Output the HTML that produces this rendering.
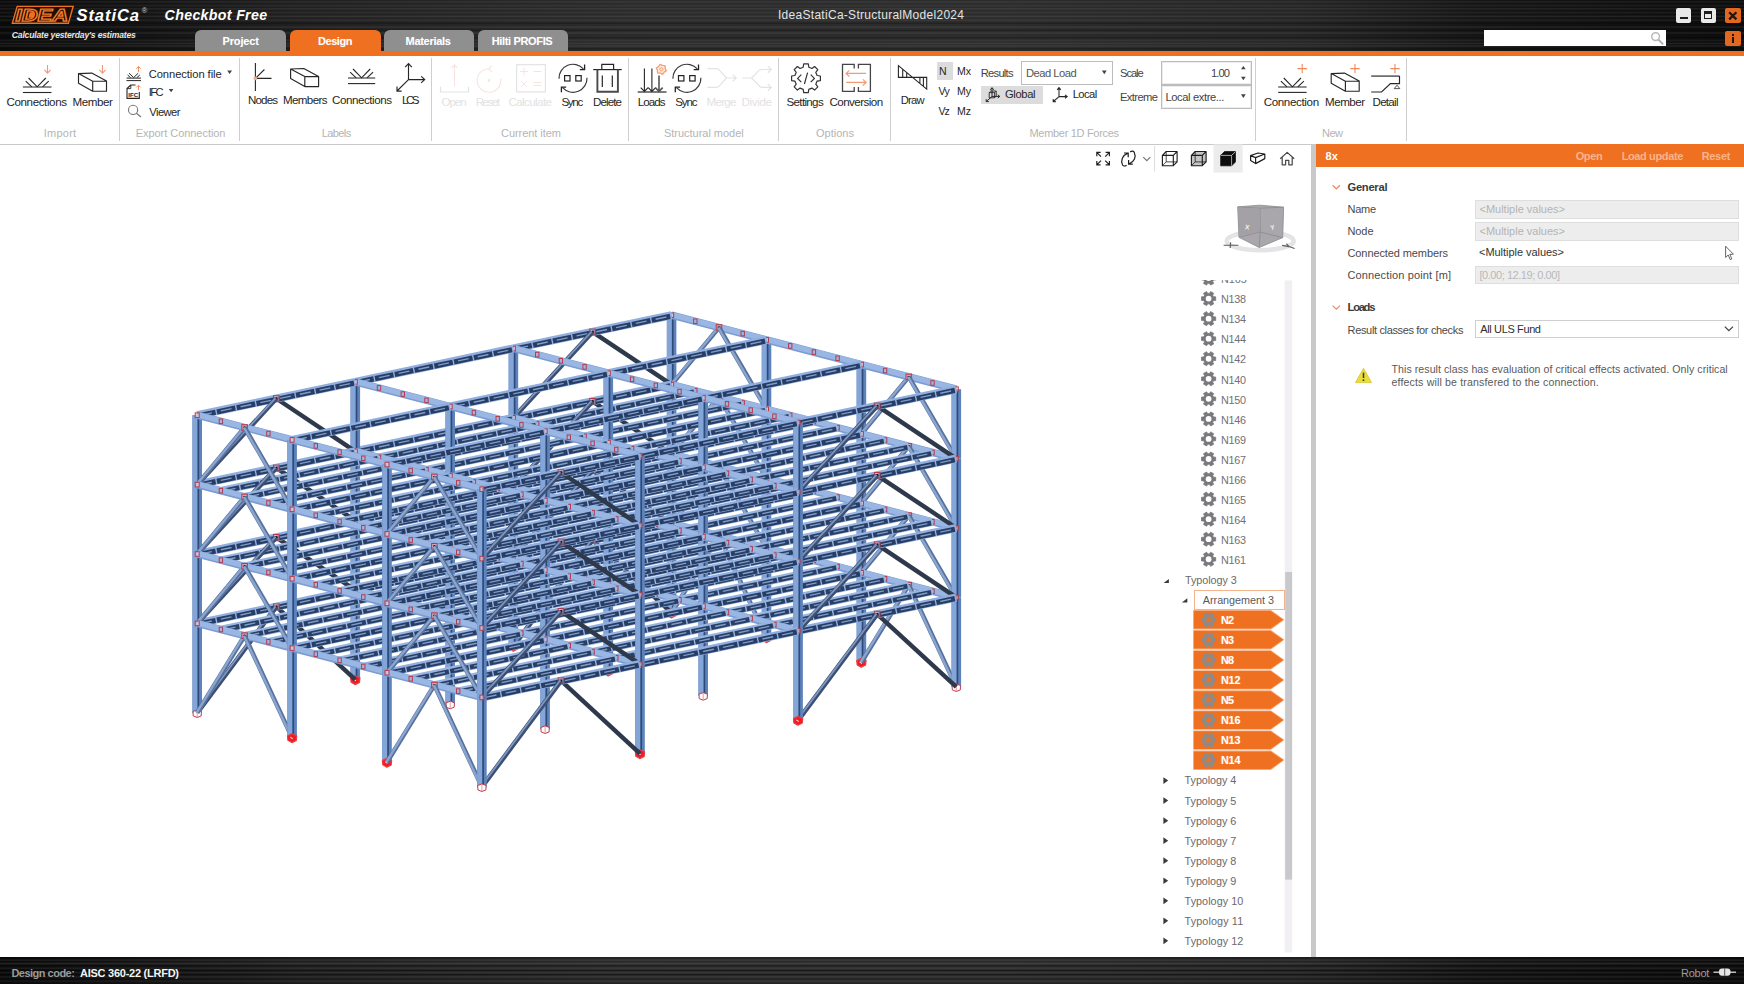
<!DOCTYPE html>
<html lang="en"><head><meta charset="utf-8"><title>IdeaStatiCa-StructuralModel2024</title>
<style>
html,body{margin:0;padding:0;background:#fff;}
body{width:1744px;height:984px;overflow:hidden;font-family:"Liberation Sans",sans-serif;}
#app{position:relative;width:1744px;height:984px;overflow:hidden;background:#fff;}
.t{position:absolute;white-space:nowrap;line-height:normal;font-family:"Liberation Sans",sans-serif;}
.abs{position:absolute;}
svg{position:absolute;overflow:visible;}
#titlebar{left:0;top:0;width:1744px;height:51px;}
#stripe{left:0;top:51px;width:1744px;height:4.6px;background:#f07021;}
.tab{position:absolute;top:30px;height:21.1px;border-radius:6px 6px 0 0;background:#8f8f8f;}
.tab.on{background:#f07021;height:23px;}
#ribbon{left:0;top:55.6px;width:1744px;height:88px;background:#fff;border-bottom:1px solid #c9c9c9;}
.vsep{position:absolute;top:58px;height:83px;width:1px;background:#cfcfcf;}
#status{left:0;top:957px;width:1744px;height:27px;}
.inp{position:absolute;left:1475px;width:261.5px;height:16.5px;background:#ededed;border:1px solid #dedede;box-sizing:content-box;}

#titlebar{background:linear-gradient(180deg,rgba(255,255,255,0) 0px,rgba(255,255,255,0) 0.5px,rgba(255,255,255,0.071) 1.9px,rgba(255,255,255,0) 3.3px,rgba(255,255,255,0) 4.3px,rgba(255,255,255,0.063) 5.7px,rgba(255,255,255,0) 7.1px,rgba(255,255,255,0) 7.4px,rgba(255,255,255,0.088) 8.8px,rgba(255,255,255,0) 10.2px,rgba(255,255,255,0) 11.2px,rgba(255,255,255,0.059) 12.6px,rgba(255,255,255,0) 14.0px,rgba(255,255,255,0) 15.0px,rgba(255,255,255,0.082) 16.4px,rgba(255,255,255,0) 17.8px,rgba(255,255,255,0) 18.8px,rgba(255,255,255,0.073) 20.2px,rgba(255,255,255,0) 21.6px,rgba(0,0,0,0) 22.2px,rgba(0,0,0,0.292) 23.3px,rgba(0,0,0,0) 24.4px,rgba(255,255,255,0) 25.7px,rgba(255,255,255,0.080) 27.1px,rgba(255,255,255,0) 28.5px,rgba(0,0,0,0) 29.2px,rgba(0,0,0,0.287) 30.3px,rgba(0,0,0,0) 31.4px,rgba(255,255,255,0) 31.6px,rgba(255,255,255,0.077) 33.0px,rgba(255,255,255,0) 34.4px,rgba(0,0,0,0) 36.7px,rgba(0,0,0,0.294) 37.8px,rgba(0,0,0,0) 38.9px,rgba(255,255,255,0) 39.0px,rgba(255,255,255,0.060) 40.4px,rgba(255,255,255,0) 41.8px,rgba(255,255,255,0) 42.1px,rgba(255,255,255,0.076) 43.5px,rgba(255,255,255,0) 44.9px,rgba(255,255,255,0) 44.6px,rgba(255,255,255,0.096) 46.0px,rgba(255,255,255,0) 47.4px,rgba(0,0,0,0) 47.8px,rgba(0,0,0,0.305) 48.9px,rgba(0,0,0,0) 50.0px,rgba(0,0,0,0) 51px),linear-gradient(90deg,#0b0b0b 0px,#121212 120px,#202020 300px,#2b2b2b 620px,#2c2c2c 1000px,#252525 1300px,#151515 1480px,#0c0c0c 1744px);}
#status{background:linear-gradient(180deg,rgba(255,255,255,0) 0px,rgba(0,0,0,0) -0.1px,rgba(0,0,0,0.325) 1.0px,rgba(0,0,0,0) 2.1px,rgba(255,255,255,0) 1.6px,rgba(255,255,255,0.086) 3.0px,rgba(255,255,255,0) 4.4px,rgba(255,255,255,0) 5.2px,rgba(255,255,255,0.102) 6.6px,rgba(255,255,255,0) 8.0px,rgba(0,0,0,0) 7.7px,rgba(0,0,0,0.395) 8.8px,rgba(0,0,0,0) 9.9px,rgba(255,255,255,0) 9.8px,rgba(255,255,255,0.075) 11.2px,rgba(255,255,255,0) 12.6px,rgba(0,0,0,0) 12.3px,rgba(0,0,0,0.475) 13.4px,rgba(0,0,0,0) 14.5px,rgba(255,255,255,0) 14.0px,rgba(255,255,255,0.057) 15.4px,rgba(255,255,255,0) 16.8px,rgba(0,0,0,0) 16.5px,rgba(0,0,0,0.452) 17.6px,rgba(0,0,0,0) 18.7px,rgba(255,255,255,0) 18.4px,rgba(255,255,255,0.069) 19.8px,rgba(255,255,255,0) 21.2px,rgba(0,0,0,0) 20.9px,rgba(0,0,0,0.309) 22.0px,rgba(0,0,0,0) 23.1px,rgba(255,255,255,0) 22.6px,rgba(255,255,255,0.061) 24.0px,rgba(255,255,255,0) 25.4px,rgba(0,0,0,0) 24.9px,rgba(0,0,0,0.342) 26.0px,rgba(0,0,0,0) 27.1px,rgba(0,0,0,0) 27px),linear-gradient(90deg,#0b0b0b 0px,#121212 120px,#202020 300px,#2b2b2b 620px,#2c2c2c 1000px,#252525 1300px,#151515 1480px,#0c0c0c 1744px);}

</style></head>
<body>
<div id="app">
<div id="titlebar" class="abs brushed"></div>
<div id="stripe" class="abs"></div>
<svg style="left:0;top:0" width="160" height="30" viewBox="0 0 160 30"><path d="M17.2 6.3 H73.2 L68.4 23.2 H12.3 Z" fill="#1f0d02" stroke="#ec7222" stroke-width="1.35"/><text x="15.6" y="21.3" font-family="Liberation Sans, sans-serif" font-size="16.4" font-weight="bold" font-style="italic" fill="#100703" stroke="#f07a2a" stroke-width="1.25" textLength="52.5" lengthAdjust="spacingAndGlyphs">IDEA</text><rect x="29.2" y="12.2" width="4.6" height="5.6" fill="#f07021" transform="skewX(-14) translate(3.6 0)"/></svg>
<span class="t" style="left:76.5px;top:6.0px;font-size:16.6px;color:#ffffff;font-weight:bold;font-style:italic;letter-spacing:0.888px;">StatiCa</span>
<span class="t" style="left:141.8px;top:6.0px;font-size:7.5px;color:#d2d2d2;font-weight:normal;font-style:normal;">®</span>
<span class="t" style="left:164.6px;top:7.0px;font-size:14.2px;color:#ffffff;font-weight:bold;font-style:italic;letter-spacing:0.328px;">Checkbot Free</span>
<span class="t" style="left:11.8px;top:30.0px;font-size:8.6px;color:#e6e6e6;font-weight:bold;font-style:italic;letter-spacing:-0.186px;">Calculate yesterday's estimates</span>
<span class="t" style="left:778.0px;top:8.0px;font-size:12px;color:#e4e4e4;font-weight:normal;font-style:normal;letter-spacing:0.285px;">IdeaStatiCa-StructuralModel2024</span>
<div class="tab" style="left:195px;width:90.7px"></div>
<span class="t" style="left:222.5px;top:35.0px;font-size:11px;color:#ffffff;font-weight:bold;font-style:normal;letter-spacing:-0.133px;text-shadow:0 0 1px rgba(255,255,255,.25);">Project</span>
<div class="tab on" style="left:290px;width:90.5px"></div>
<span class="t" style="left:318.0px;top:35.0px;font-size:11px;color:#ffffff;font-weight:bold;font-style:normal;letter-spacing:-0.438px;text-shadow:0 0 1px rgba(255,255,255,.25);">Design</span>
<div class="tab" style="left:383.7px;width:90px"></div>
<span class="t" style="left:405.5px;top:35.0px;font-size:11px;color:#ffffff;font-weight:bold;font-style:normal;letter-spacing:-0.275px;text-shadow:0 0 1px rgba(255,255,255,.25);">Materials</span>
<div class="tab" style="left:477.5px;width:90px"></div>
<span class="t" style="left:491.7px;top:35.0px;font-size:11px;color:#ffffff;font-weight:bold;font-style:normal;letter-spacing:-0.344px;text-shadow:0 0 1px rgba(255,255,255,.25);">Hilti PROFIS</span>
<div class="abs" style="left:1676px;top:7.5px;width:15.3px;height:15.5px;background:#e9e9e9;border-radius:2px"></div>
<div class="abs" style="left:1680px;top:17.2px;width:8px;height:2.3px;background:#1c1c1c"></div>
<div class="abs" style="left:1700.5px;top:7.5px;width:15.5px;height:15.5px;background:#e9e9e9;border-radius:2px"></div>
<div class="abs" style="left:1703.6px;top:10.8px;width:6.2px;height:4.6px;border:1.6px solid #1c1c1c;border-top-width:3px"></div>
<div class="abs" style="left:1725px;top:7.5px;width:15.5px;height:15.5px;background:#e2681f;border-radius:2px"></div>
<svg style="left:1725px;top:7.5px" width="16" height="16" viewBox="0 0 16 16"><path d="M4.2 4.2 L11.4 11.4 M11.4 4.2 L4.2 11.4" stroke="#20140c" stroke-width="2.2" fill="none"/></svg>
<div class="abs" style="left:1483.7px;top:30px;width:182.3px;height:16.2px;background:#fff"></div>
<svg style="left:1648px;top:30px" width="18" height="17" viewBox="0 0 18 17"><circle cx="7.6" cy="6.6" r="3.9" fill="none" stroke="#b9b9b9" stroke-width="1.5"/><path d="M10.4 9.6 L15.2 14.4" stroke="#b0b0b0" stroke-width="2"/></svg>
<div class="abs" style="left:1725px;top:30.5px;width:15.5px;height:15.3px;background:#e2681f;border-radius:2px"></div>
<div class="abs" style="left:1732px;top:34px;width:2px;height:2px;background:#24150b"></div>
<div class="abs" style="left:1732px;top:37.3px;width:2px;height:5.6px;background:#24150b"></div>
<div id="status" class="abs brushed"></div>
<span class="t" style="left:11.4px;top:967.0px;font-size:11px;color:#9a9a9a;font-weight:bold;font-style:normal;letter-spacing:-0.507px;">Design code:</span>
<span class="t" style="left:80.0px;top:967.0px;font-size:11px;color:#f4f4f4;font-weight:bold;font-style:normal;letter-spacing:-0.253px;">AISC 360-22 (LRFD)</span>
<span class="t" style="left:1681.0px;top:967.0px;font-size:11px;color:#9c9c9c;font-weight:normal;font-style:normal;letter-spacing:-0.265px;">Robot</span>
<svg style="left:1712px;top:964px" width="26" height="16" viewBox="0 0 26 16"><path d="M1.5 8.2 H24" stroke="#d8d8d8" stroke-width="1.3"/><rect x="7" y="4.6" width="11.5" height="7.2" rx="3" fill="#e6e6e6"/><path d="M12.7 4.6 V11.8" stroke="#555" stroke-width="1"/></svg>
<div id="ribbon" class="abs"></div>
<div class="vsep" style="left:119.0px"></div>
<div class="vsep" style="left:239.0px"></div>
<div class="vsep" style="left:430.7px"></div>
<div class="vsep" style="left:628.2px"></div>
<div class="vsep" style="left:777.7px"></div>
<div class="vsep" style="left:890.2px"></div>
<div class="vsep" style="left:1255.0px"></div>
<div class="vsep" style="left:1406.1px"></div>
<span class="t" style="left:6.5px;top:95.0px;font-size:11.6px;color:#262626;font-weight:normal;font-style:normal;letter-spacing:-0.395px;">Connections</span>
<span class="t" style="left:72.6px;top:95.0px;font-size:11.6px;color:#262626;font-weight:normal;font-style:normal;letter-spacing:-0.426px;">Member</span>
<span class="t" style="left:43.7px;top:127.0px;font-size:11px;color:#b4b4b4;font-weight:normal;font-style:normal;letter-spacing:0.263px;">Import</span>
<span class="t" style="left:148.7px;top:68.0px;font-size:11.2px;color:#262626;font-weight:normal;font-style:normal;letter-spacing:-0.073px;">Connection file</span>
<span class="t" style="left:148.7px;top:86.0px;font-size:11.2px;color:#262626;font-weight:normal;font-style:normal;letter-spacing:-1.516px;">IFC</span>
<span class="t" style="left:149.3px;top:106.0px;font-size:11.2px;color:#262626;font-weight:normal;font-style:normal;letter-spacing:-0.560px;">Viewer</span>
<span class="t" style="left:135.7px;top:127.0px;font-size:11px;color:#b4b4b4;font-weight:normal;font-style:normal;letter-spacing:-0.044px;">Export Connection</span>
<span class="t" style="left:248.0px;top:93.0px;font-size:11.6px;color:#262626;font-weight:normal;font-style:normal;letter-spacing:-0.879px;">Nodes</span>
<span class="t" style="left:283.0px;top:93.0px;font-size:11.6px;color:#262626;font-weight:normal;font-style:normal;letter-spacing:-0.638px;">Members</span>
<span class="t" style="left:332.0px;top:93.0px;font-size:11.6px;color:#262626;font-weight:normal;font-style:normal;letter-spacing:-0.445px;">Connections</span>
<span class="t" style="left:402.0px;top:93.0px;font-size:11.6px;color:#262626;font-weight:normal;font-style:normal;letter-spacing:-2.481px;">LCS</span>
<span class="t" style="left:321.7px;top:127.0px;font-size:11px;color:#b4b4b4;font-weight:normal;font-style:normal;letter-spacing:-0.584px;">Labels</span>
<span class="t" style="left:441.4px;top:95.0px;font-size:11.6px;color:#e2e2e2;font-weight:normal;font-style:normal;letter-spacing:-1.025px;">Open</span>
<span class="t" style="left:475.7px;top:95.0px;font-size:11.6px;color:#e2e2e2;font-weight:normal;font-style:normal;letter-spacing:-1.524px;">Reset</span>
<span class="t" style="left:508.5px;top:95.0px;font-size:11.6px;color:#e2e2e2;font-weight:normal;font-style:normal;letter-spacing:-0.605px;">Calculate</span>
<span class="t" style="left:561.4px;top:95.0px;font-size:11.6px;color:#262626;font-weight:normal;font-style:normal;letter-spacing:-1.327px;">Sync</span>
<span class="t" style="left:592.9px;top:95.0px;font-size:11.6px;color:#262626;font-weight:normal;font-style:normal;letter-spacing:-0.883px;">Delete</span>
<span class="t" style="left:501.0px;top:127.0px;font-size:11px;color:#b4b4b4;font-weight:normal;font-style:normal;letter-spacing:-0.048px;">Current item</span>
<span class="t" style="left:637.7px;top:95.0px;font-size:11.6px;color:#262626;font-weight:normal;font-style:normal;letter-spacing:-0.923px;">Loads</span>
<span class="t" style="left:675.2px;top:95.0px;font-size:11.6px;color:#262626;font-weight:normal;font-style:normal;letter-spacing:-1.160px;">Sync</span>
<span class="t" style="left:706.5px;top:95.0px;font-size:11.6px;color:#e2e2e2;font-weight:normal;font-style:normal;letter-spacing:-0.719px;">Merge</span>
<span class="t" style="left:741.6px;top:95.0px;font-size:11.6px;color:#e2e2e2;font-weight:normal;font-style:normal;letter-spacing:-0.384px;">Divide</span>
<span class="t" style="left:664.0px;top:127.0px;font-size:11px;color:#b4b4b4;font-weight:normal;font-style:normal;letter-spacing:-0.026px;">Structural model</span>
<span class="t" style="left:786.5px;top:95.0px;font-size:11.6px;color:#262626;font-weight:normal;font-style:normal;letter-spacing:-0.672px;">Settings</span>
<span class="t" style="left:829.5px;top:95.0px;font-size:11.6px;color:#262626;font-weight:normal;font-style:normal;letter-spacing:-0.551px;">Conversion</span>
<span class="t" style="left:816.0px;top:127.0px;font-size:11px;color:#b4b4b4;font-weight:normal;font-style:normal;letter-spacing:0.013px;">Options</span>
<span class="t" style="left:900.7px;top:94.0px;font-size:11.2px;color:#262626;font-weight:normal;font-style:normal;letter-spacing:-0.770px;">Draw</span>
<div class="abs" style="left:937.4px;top:62.3px;width:16px;height:17.6px;background:#dcdcdc"></div>
<span class="t" style="left:938.9px;top:65.0px;font-size:10.6px;color:#262626;font-weight:normal;font-style:normal;letter-spacing:-0.756px;">N</span>
<span class="t" style="left:957.0px;top:65.0px;font-size:10.6px;color:#262626;font-weight:normal;font-style:normal;letter-spacing:-0.125px;">Mx</span>
<span class="t" style="left:938.6px;top:85.0px;font-size:10.6px;color:#262626;font-weight:normal;font-style:normal;letter-spacing:-0.684px;">Vy</span>
<span class="t" style="left:957.0px;top:85.0px;font-size:10.6px;color:#262626;font-weight:normal;font-style:normal;letter-spacing:-0.125px;">My</span>
<span class="t" style="left:938.6px;top:105.0px;font-size:10.6px;color:#262626;font-weight:normal;font-style:normal;letter-spacing:-1.075px;">Vz</span>
<span class="t" style="left:957.0px;top:105.0px;font-size:10.6px;color:#262626;font-weight:normal;font-style:normal;letter-spacing:-0.125px;">Mz</span>
<span class="t" style="left:980.7px;top:67.0px;font-size:11.2px;color:#444;font-weight:normal;font-style:normal;letter-spacing:-0.735px;">Results</span>
<div class="abs" style="left:1021px;top:61.3px;width:89.6px;height:21.8px;border:1px solid #bcbcbc;background:#fff"></div>
<span class="t" style="left:1026.0px;top:67.0px;font-size:11.2px;color:#555;font-weight:normal;font-style:normal;letter-spacing:-0.506px;">Dead Load</span>
<span class="t" style="left:1120.0px;top:67.0px;font-size:11.2px;color:#444;font-weight:normal;font-style:normal;letter-spacing:-1.075px;">Scale</span>
<div class="abs" style="left:1160.6px;top:61.3px;width:89.6px;height:21.8px;border:1px solid #bcbcbc;background:#fff;box-shadow:inset 0 0 0 1px #ececec"></div>
<span class="t" style="left:1210.9px;top:67.0px;font-size:11.2px;color:#444;font-weight:normal;font-style:normal;letter-spacing:-0.894px;">1.00</span>
<div class="abs" style="left:981px;top:86.1px;width:62px;height:17.5px;background:#dcdcdc"></div>
<span class="t" style="left:1004.9px;top:88.0px;font-size:11.2px;color:#262626;font-weight:normal;font-style:normal;letter-spacing:-0.349px;">Global</span>
<span class="t" style="left:1072.7px;top:88.0px;font-size:11.2px;color:#262626;font-weight:normal;font-style:normal;letter-spacing:-0.562px;">Local</span>
<span class="t" style="left:1120.0px;top:91.0px;font-size:11.2px;color:#444;font-weight:normal;font-style:normal;letter-spacing:-0.609px;">Extreme</span>
<div class="abs" style="left:1160.6px;top:84.9px;width:89.6px;height:22.2px;border:1px solid #bcbcbc;background:#fff;box-shadow:inset 0 0 0 1px #ececec"></div>
<span class="t" style="left:1165.4px;top:91.0px;font-size:11.2px;color:#444;font-weight:normal;font-style:normal;letter-spacing:-0.389px;">Local extre...</span>
<span class="t" style="left:1029.5px;top:127.0px;font-size:11px;color:#b4b4b4;font-weight:normal;font-style:normal;letter-spacing:-0.309px;">Member 1D Forces</span>
<span class="t" style="left:1263.7px;top:95.0px;font-size:11.6px;color:#262626;font-weight:normal;font-style:normal;letter-spacing:-0.362px;">Connection</span>
<span class="t" style="left:1325.0px;top:95.0px;font-size:11.6px;color:#262626;font-weight:normal;font-style:normal;letter-spacing:-0.486px;">Member</span>
<span class="t" style="left:1372.5px;top:95.0px;font-size:11.6px;color:#262626;font-weight:normal;font-style:normal;letter-spacing:-0.731px;">Detail</span>
<span class="t" style="left:1322.0px;top:127.0px;font-size:11px;color:#b4b4b4;font-weight:normal;font-style:normal;letter-spacing:-0.508px;">New</span>
<svg style="left:0;top:0" width="1744" height="150" viewBox="0 0 1744 150"><path d="M22.9 87.0 H51.5" stroke="#6a6a6a" stroke-width="1.5"/><path d="M22.9 92.5 H51.5" stroke="#262626" stroke-width="1.1"/><path d="M28.6 78.0 L37.2 86.8 L45.800000000000004 78.0 M25.700000000000003 81.1 L31.800000000000004 86.8 M48.7 81.1 L42.6 86.8" stroke="#262626" stroke-width="1.1" fill="none"/><path d="M47.5 64.9 V73.2 M44.4 69.9 L47.5 73.2 L50.6 69.9" stroke="#f29a78" stroke-width="1.1" fill="none"/><path d="M78.5 73.6 L91.7 73.1 L106.5 81.1 L92.7 81.2 Z M78.5 73.6 L78.5 83.2 L92.7 91.2 L92.7 81.2 M92.7 91.2 L106.5 91.2 L106.5 81.1" stroke="#262626" stroke-width="1.15" fill="none" stroke-linejoin="round"/><path d="M102.5 64.9 V73.2 M99.4 69.9 L102.5 73.2 L105.6 69.9" stroke="#f29a78" stroke-width="1.1" fill="none"/><path d="M126.5 78.1 H141 M126.5 80.6 H141" stroke="#262626" stroke-width="1"/><path d="M129 73.2 L133.7 77.6 L138.2 73.2 M127.6 75 L130.6 77.7 M139.8 75 L136.8 77.7" stroke="#262626" stroke-width="1" fill="none"/><path d="M138.5 72.0 V66.5 M136.3 68.7 L138.5 66.5 L140.7 68.7" stroke="#f08a5c" stroke-width="1.0" fill="none"/><path d="M130.8 85 H135.5 M130.8 85 L127 88.6 V98.4 H139.3 V92" stroke="#262626" stroke-width="1.1" fill="none"/><path d="M127 88.6 H130.8 V85" stroke="#262626" stroke-width="0.9" fill="none"/><text x="128.3" y="97.2" font-family="Liberation Sans, sans-serif" font-size="6.2" font-weight="bold" fill="#262626" textLength="9.8" lengthAdjust="spacingAndGlyphs">IFC</text><path d="M138.5 90.2 V85.2 M136.3 87.4 L138.5 85.2 L140.7 87.4" stroke="#f08a5c" stroke-width="1.0" fill="none"/><circle cx="133.1" cy="109.9" r="4.6" stroke="#777" stroke-width="1.1" fill="none"/><path d="M136.4 113.3 L141 117" stroke="#777" stroke-width="1.2"/><path d="M227.2 70.6 H232.0 L229.6 74.0 Z" fill="#444"/><path d="M168.8 89.1 H173.4 L171.10000000000002 92.3 Z" fill="#444"/><path d="M255.4 63 V91.1 M255.4 78.4 H271.5 M255.4 78.4 L264.4 69.5" stroke="#262626" stroke-width="1.1" fill="none"/><circle cx="255.4" cy="78.4" r="1.8" fill="#f4a58a"/><path d="M290.6 69.0 L303.8 68.5 L318.6 76.5 L304.8 76.6 Z M290.6 69.0 L290.6 78.6 L304.8 86.6 L304.8 76.6 M304.8 86.6 L318.6 86.6 L318.6 76.5" stroke="#262626" stroke-width="1.15" fill="none" stroke-linejoin="round"/><path d="M348.0 78.0 H375.2" stroke="#6a6a6a" stroke-width="1.5"/><path d="M348.0 83.6 H375.2" stroke="#262626" stroke-width="1.1"/><path d="M353.0 69.0 L361.6 77.8 L370.20000000000005 69.0 M350.1 72.1 L356.20000000000005 77.8 M373.1 72.1 L367.0 77.8" stroke="#262626" stroke-width="1.1" fill="none"/><path d="M408.5 79.6 V63.8 M405.2 67.2 L408.5 63.6 L411.8 67.2 M408.5 79.6 H424.6 M421.2 76.3 L424.7 79.6 L421.2 82.9 M408.5 79.6 L397 91 M397 86.6 V91.1 H401.6" stroke="#262626" stroke-width="1.15" fill="none"/><path d="M440.5 86.7 V92 H468.5 V86.7" stroke="#e3e3e3" stroke-width="1.2" fill="none"/><path d="M454.5 86 V65 M451.6 68 L454.5 64.9 L457.4 68" stroke="#f8e4df" stroke-width="1.1" fill="none"/><path d="M500.6 78.5 A11.8 11.8 0 1 1 488.9 68.7" stroke="#f8e4df" stroke-width="1.1" fill="none"/><circle cx="489" cy="80.4" r="1.3" fill="#f8e4df"/><path d="M492 65.6 L488.6 68.7 L492 71.8" stroke="#f8e4df" stroke-width="1.1" fill="none"/><rect x="516.6" y="64.7" width="28.8" height="27.2" stroke="#e3e3e3" stroke-width="1.2" fill="none"/><path d="M520 71.5 H528 M524 67.5 V75.5 M533.5 71.5 H541.5 M521 81 L527 87 M527 81 L521 87 M533.5 82.6 H541.5 M533.5 85.4 H541.5" stroke="#f8e4df" stroke-width="1" fill="none"/><path d="M559.0 78.8 A14.0 14.0 0 0 1 583.4 68.9" stroke="#3a3a3a" stroke-width="1.2" fill="none"/><path d="M587.0 77.8 A14.0 14.0 0 0 1 562.6 87.7" stroke="#3a3a3a" stroke-width="1.2" fill="none"/><path d="M579.8 69.7 H584.6 V64.5" stroke="#222" stroke-width="1.3" fill="none"/><path d="M566.2 87.1 H561.4 V92.3" stroke="#222" stroke-width="1.3" fill="none"/><rect x="564.6" y="75.6" width="5.4" height="5.4" stroke="#222" stroke-width="1.2" fill="none"/><rect x="575.8" y="75.6" width="5.4" height="5.4" stroke="#222" stroke-width="1.2" fill="none"/><path d="M601.8 69.4 V64.4 H613.6 V69.4" stroke="#262626" stroke-width="1.2" fill="none"/><path d="M593.2 69.6 H621.7" stroke="#262626" stroke-width="1.2"/><path d="M597.4 69.6 V91.8 H617.9 V69.6" stroke="#4a4a4a" stroke-width="1.9" fill="none"/><path d="M602.3 75.5 V87 M612.3 75.5 V87" stroke="#262626" stroke-width="1.2"/><path d="M637.7 92 H666.5" stroke="#262626" stroke-width="1.2"/><path d="M644.4 68.6 V91.6 M640.6999999999999 87.6 L644.4 91.4 L648.1 87.6" stroke="#262626" stroke-width="1.1" fill="none"/><path d="M651.9 68.6 V91.6 M648.1999999999999 87.6 L651.9 91.4 L655.6 87.6" stroke="#262626" stroke-width="1.1" fill="none"/><path d="M659.0 75.5 V91.6 M655.3 87.6 L659.0 91.4 L662.7 87.6" stroke="#555" stroke-width="1.6" fill="none"/><path d="M666.3 70.6 L664.1 72.1 L662.6 74.3 L660.3 73.2 L657.6 73.0 L657.4 70.3 L656.3 68.0 L658.5 66.5 L660.0 64.3 L662.3 65.4 L665.0 65.6 L665.2 68.3 Z" stroke="#f0a079" stroke-width="1.3" fill="#fde9df" stroke-linejoin="round"/><circle cx="661.3" cy="69.3" r="1.6" fill="none" stroke="#f0a079" stroke-width="1"/><path d="M672.9 78.8 A14.0 14.0 0 0 1 697.3 68.9" stroke="#3a3a3a" stroke-width="1.2" fill="none"/><path d="M700.9 77.8 A14.0 14.0 0 0 1 676.5 87.7" stroke="#3a3a3a" stroke-width="1.2" fill="none"/><path d="M693.6999999999999 69.7 H698.5 V64.5" stroke="#222" stroke-width="1.3" fill="none"/><path d="M680.1 87.1 H675.3 V92.3" stroke="#222" stroke-width="1.3" fill="none"/><rect x="678.5" y="75.6" width="5.4" height="5.4" stroke="#222" stroke-width="1.2" fill="none"/><rect x="689.6999999999999" y="75.6" width="5.4" height="5.4" stroke="#222" stroke-width="1.2" fill="none"/><path d="M707.5 68.6 H716 Q718 68.6 719.4 70.2 L726.4 78 L719.4 85.8 Q718 87.4 716 87.4 H707.5 M726.4 78 H736 M732.6 74.6 L736.2 78 L732.6 81.4" stroke="#e3e3e3" stroke-width="1.2" fill="none"/><path d="M742.2 78 H751.6 L758.8 70.6 Q760 69.5 762 69.5 H771 M751.6 78 L758.8 85.4 Q760 87.4 762 87.4 H771 M767.8 66.2 L771.3 69.5 L767.8 72.8 M767.8 84.1 L771.3 87.4 L767.8 90.7" stroke="#e3e3e3" stroke-width="1.2" fill="none"/><path d="M803.2 67.2 L803.7 63.9 L808.3 63.9 L808.8 67.2 L811.9 68.5 L814.6 66.5 L817.8 69.7 L815.8 72.4 L817.1 75.5 L820.4 76.0 L820.4 80.6 L817.1 81.1 L815.8 84.2 L817.8 86.9 L814.6 90.1 L811.9 88.1 L808.8 89.4 L808.3 92.7 L803.7 92.7 L803.2 89.4 L800.1 88.1 L797.4 90.1 L794.2 86.9 L796.2 84.2 L794.9 81.1 L791.6 80.6 L791.6 76.0 L794.9 75.5 L796.2 72.4 L794.2 69.7 L797.4 66.5 L800.1 68.5 Z" stroke="#333" stroke-width="1.2" fill="none" stroke-linejoin="round"/><path d="M801.3 74.6 L797.6 78.4 L801.3 82.2 M810.7 74.6 L814.4 78.4 L810.7 82.2 M807.6 72.6 L804.4 84" stroke="#333" stroke-width="1.2" fill="none"/><path d="M854.2 68.6 V64.3 H842.5 V91.4 H854.2 V87 M858.4 68.6 V64.3 H870.4 V91.4 H858.4 V87" stroke="#444" stroke-width="1.3" fill="none"/><path d="M866 73.4 H846.2 M849.4 70.3 L846 73.4 L849.4 76.5 M846.2 82.4 H866 M862.8 79.3 L866.2 82.4 L862.8 85.5" stroke="#f09a76" stroke-width="1.1" fill="none"/><path d="M898.4 65.7 V77.4 H926.7 V89.2 Z M898.4 65.7 L926.7 89.2 M902.7 69.4 V77.4 M906.7 72.7 V77.4 M919.9 77.4 V83.4 M923.4 77.4 V86.4" stroke="#262626" stroke-width="1.1" fill="none"/><path d="M1101.9 70.6 H1106.7 L1104.3000000000002 74.3 Z" fill="#444"/><path d="M1241 69.3 H1245.7 L1243.35 66.0 Z" fill="#444"/><path d="M1241 76.8 H1245.7 L1243.35 80.3 Z" fill="#444"/><path d="M992 96.4 V88 M990.3 89.8 L992 87.6 L993.7 89.8 M992 96.4 H999.4 M997.8 94.8 L999.8 96.4 L997.8 98 M992 96.4 L986.4 101.4 M986.2 99.2 V101.6 H988.8" stroke="#262626" stroke-width="1" fill="none"/><path d="M989.2 92.6 H994.6 V97.8 H989.2 Z M990.8 91 H996.2 V96.2 M989.2 92.6 L990.8 91 M994.6 92.6 L996.2 91 M994.6 97.8 L996.2 96.2" stroke="#262626" stroke-width="0.9" fill="none"/><path d="M1059 96.6 V88 M1057.2 89.9 L1059 87.6 L1060.8 89.9 M1059 96.6 H1066.8 M1065 94.9 L1067.2 96.6 L1065 98.3 M1059 96.6 L1053.4 101.5 M1053.2 99 V101.7 H1056" stroke="#262626" stroke-width="1.05" fill="none"/><path d="M1241 94.3 H1245.7 L1243.35 97.89999999999999 Z" fill="#444"/><path d="M1278.2 87.0 H1306.6000000000001" stroke="#6a6a6a" stroke-width="1.5"/><path d="M1278.2 92.4 H1306.6000000000001" stroke="#262626" stroke-width="1.1"/><path d="M1283.8000000000002 78.0 L1292.4 86.8 L1301.0 78.0 M1280.9 81.1 L1287.0 86.8 M1303.9 81.1 L1297.8000000000002 86.8" stroke="#262626" stroke-width="1.1" fill="none"/><path d="M1297.5 68.6 H1306.9 M1302.2 63.89999999999999 V73.3" stroke="#f08a5c" stroke-width="1.1"/><path d="M1331.2 73.6 L1344.4 73.1 L1359.2 81.1 L1345.4 81.2 Z M1331.2 73.6 L1331.2 83.2 L1345.4 91.2 L1345.4 81.2 M1345.4 91.2 L1359.2 91.2 L1359.2 81.1" stroke="#262626" stroke-width="1.15" fill="none" stroke-linejoin="round"/><path d="M1350.3 68.6 H1359.7 M1355 63.89999999999999 V73.3" stroke="#f08a5c" stroke-width="1.1"/><path d="M1371.2 76.1 H1399.5" stroke="#555" stroke-width="1.5"/><path d="M1399.5 76.1 V83.6 H1390.4 L1381.6 92 H1371.2" stroke="#262626" stroke-width="1.15" fill="none"/><path d="M1397 85.2 L1394.2 88.6 H1399.8 Z" stroke="#444" stroke-width="0.9" fill="none"/><path d="M1390.3 68.6 H1399.7 M1395 63.89999999999999 V73.3" stroke="#f08a5c" stroke-width="1.1"/></svg>
<svg style="left:0;top:0;pointer-events:none" width="1744" height="984" viewBox="0 0 1744 984"><style>.ca{stroke:#5e83ba;stroke-width:9.6;fill:none}.cb{stroke:#83a5d8;stroke-width:5.6;fill:none}.cc{stroke:#2d4a7a;stroke-width:1.7;fill:none}.ua{stroke:#90aee0;stroke-width:8.2;fill:none}.ub{stroke:#273d63;stroke-width:5.2;fill:none;stroke-dasharray:18.8 1.4}.uc{stroke:#7f9cc8;stroke-width:1.35;fill:none;stroke-dasharray:11 9.2;stroke-dashoffset:-3.9}.ja{stroke:#98b5e2;stroke-width:7.8;fill:none}.jb{stroke:#293f65;stroke-width:4.9;fill:none;stroke-dasharray:18.8 1.4}.va{stroke:#7b9cd2;stroke-width:7.4;fill:none}.vb{stroke:#9ab7e4;stroke-width:5.4;fill:none}.la{stroke:#57719c;stroke-width:4.6;fill:none}.lb{stroke:#8aa6d0;stroke-width:2.4;fill:none}.ma{stroke:#3c4f72;stroke-width:4.8;fill:none}.mb{stroke:#7d97c2;stroke-width:1.8;fill:none}.da{stroke:#2e394c;stroke-width:4.4;fill:none}.mk{fill:none;stroke:#b93a4a;stroke-width:1}.mn{fill:rgba(235,215,225,.55);stroke:#b93a4a;stroke-width:1}</style><g style="filter:blur(0.4px)"><path class="ca" d="M671.6 612.9L671.6 523.4"/><path class="cb" d="M669.7 612.9L669.7 523.4"/><path class="cc" d="M672.7 612.9L672.7 523.4"/><path d="M667.0 611.3L671.2 609.1L676.2 611.1L675.8 615.7L671.4 617.9L667.4 615.5Z" fill="#ee1c24" stroke="#f23a40" stroke-width="1.2" stroke-linejoin="round"/><path d="M669.8 612.5L672.2 614.1" stroke="#fbd0d0" stroke-width="1.1"/><path class="ca" d="M671.6 523.4L671.6 454.0"/><path class="cb" d="M669.7 523.4L669.7 454.0"/><path class="cc" d="M672.7 523.4L672.7 454.0"/><path class="la" d="M719.0 535.7L671.6 612.9"/><path class="lb" d="M718.3 535.7L670.9 612.9"/><path class="da" d="M592.5 540.1L671.6 612.9"/><path class="ca" d="M671.6 454.0L671.6 384.6"/><path class="cb" d="M669.7 454.0L669.7 384.6"/><path class="cc" d="M672.7 454.0L672.7 384.6"/><path class="la" d="M719.0 466.3L671.6 523.4"/><path class="lb" d="M718.3 466.3L670.9 523.4"/><path class="ca" d="M671.6 384.6L671.6 315.2"/><path class="cb" d="M669.7 384.6L669.7 315.2"/><path class="cc" d="M672.7 384.6L672.7 315.2"/><path class="da" d="M592.5 470.7L671.6 523.4"/><path class="va" d="M671.6 523.4L766.5 548.1"/><path class="vb" d="M671.6 522.8L766.5 547.5"/><path class="la" d="M719.0 396.9L671.6 454.0"/><path class="lb" d="M718.3 396.9L670.9 454.0"/><rect class="mk" x="693.6" y="527.2" width="3.4" height="4.6"/><rect class="mk" x="717.3" y="533.3" width="3.4" height="4.6"/><rect class="mk" x="741.0" y="539.5" width="3.4" height="4.6"/><rect class="mn" x="669.6" y="521.1" width="4.0" height="4.6"/><rect class="mn" x="716.2" y="532.9" width="5.6" height="5.6"/><circle cx="719.0" cy="535.9" r="1.4" fill="#1d1420"/><path class="da" d="M592.5 401.3L671.6 454.0"/><path class="la" d="M719.0 535.7L766.5 637.6"/><path class="lb" d="M718.3 535.7L765.8 637.6"/><path class="va" d="M671.6 454.0L766.5 478.7"/><path class="vb" d="M671.6 453.4L766.5 478.1"/><path class="la" d="M719.0 327.5L671.6 384.6"/><path class="lb" d="M718.3 327.5L670.9 384.6"/><path class="ua" d="M513.4 556.7L671.6 523.4"/><path class="ub" d="M513.4 557.6L671.6 524.3"/><path class="uc" d="M513.4 557.4L671.6 524.1"/><rect class="mk" x="717.3" y="463.9" width="3.4" height="4.6"/><rect class="mk" x="693.6" y="457.8" width="3.4" height="4.6"/><rect class="mk" x="741.0" y="470.1" width="3.4" height="4.6"/><rect class="mn" x="669.6" y="451.7" width="4.0" height="4.6"/><rect class="mn" x="716.2" y="463.5" width="5.6" height="5.6"/><circle cx="719.0" cy="466.5" r="1.4" fill="#1d1420"/><rect class="mn" x="589.7" y="537.3" width="5.6" height="5.6"/><circle cx="592.5" cy="540.3" r="1.4" fill="#1d1420"/><path class="da" d="M592.5 331.9L671.6 384.6"/><path class="va" d="M671.6 384.6L766.5 409.3"/><path class="vb" d="M671.6 384.0L766.5 408.7"/><path class="ua" d="M513.4 487.3L671.6 454.0"/><path class="ub" d="M513.4 488.2L671.6 454.9"/><path class="uc" d="M513.4 488.0L671.6 454.7"/><rect class="mk" x="717.3" y="394.5" width="3.4" height="4.6"/><rect class="mk" x="693.6" y="388.4" width="3.4" height="4.6"/><rect class="mk" x="741.0" y="400.7" width="3.4" height="4.6"/><path class="la" d="M719.0 466.3L766.5 548.1"/><path class="lb" d="M718.3 466.3L765.8 548.1"/><rect class="mn" x="669.6" y="382.3" width="4.0" height="4.6"/><rect class="mn" x="716.2" y="394.1" width="5.6" height="5.6"/><circle cx="719.0" cy="397.1" r="1.4" fill="#1d1420"/><rect class="mn" x="589.7" y="467.9" width="5.6" height="5.6"/><circle cx="592.5" cy="470.9" r="1.4" fill="#1d1420"/><path class="ca" d="M766.5 637.6L766.5 548.1"/><path class="cb" d="M764.6 637.6L764.6 548.1"/><path class="cc" d="M767.6 637.6L767.6 548.1"/><path class="ma" d="M592.5 540.1L513.4 646.2"/><path class="mb" d="M591.7 539.7L512.6 645.8"/><path class="ja" d="M537.2 562.9L695.3 529.6"/><path class="jb" d="M537.2 563.7L695.3 530.4"/><path class="uc" d="M537.2 563.5L695.3 530.2"/><path d="M761.9 636.0L766.1 633.8L771.1 635.8L770.7 640.4L766.3 642.6L762.3 640.2Z" fill="#ee1c24" stroke="#f23a40" stroke-width="1.2" stroke-linejoin="round"/><path d="M764.7 637.2L767.1 638.8" stroke="#fbd0d0" stroke-width="1.1"/><path class="va" d="M671.6 315.2L766.5 339.9"/><path class="vb" d="M671.6 314.6L766.5 339.3"/><path class="ua" d="M513.4 417.9L671.6 384.6"/><path class="ub" d="M513.4 418.8L671.6 385.5"/><path class="uc" d="M513.4 418.6L671.6 385.3"/><rect class="mk" x="717.3" y="325.1" width="3.4" height="4.6"/><rect class="mk" x="693.6" y="319.0" width="3.4" height="4.6"/><rect class="mk" x="741.0" y="331.3" width="3.4" height="4.6"/><path class="la" d="M719.0 396.9L766.5 478.7"/><path class="lb" d="M718.3 396.9L765.8 478.7"/><rect class="mn" x="669.6" y="312.9" width="4.0" height="4.6"/><rect class="mn" x="716.2" y="324.7" width="5.6" height="5.6"/><circle cx="719.0" cy="327.7" r="1.4" fill="#1d1420"/><rect class="mn" x="589.7" y="398.5" width="5.6" height="5.6"/><circle cx="592.5" cy="401.5" r="1.4" fill="#1d1420"/><path class="ja" d="M537.2 493.5L695.3 460.2"/><path class="jb" d="M537.2 494.3L695.3 461.0"/><path class="uc" d="M537.2 494.1L695.3 460.8"/><path class="ca" d="M766.5 548.1L766.5 478.7"/><path class="cb" d="M764.6 548.1L764.6 478.7"/><path class="cc" d="M767.6 548.1L767.6 478.7"/><path class="ma" d="M592.5 470.7L513.4 556.7"/><path class="mb" d="M591.7 470.3L512.6 556.3"/><path class="ua" d="M513.4 348.5L671.6 315.2"/><path class="ub" d="M513.4 349.4L671.6 316.1"/><path class="uc" d="M513.4 349.2L671.6 315.9"/><path class="la" d="M719.0 327.5L766.5 409.3"/><path class="lb" d="M718.3 327.5L765.8 409.3"/><path class="ja" d="M560.9 569.1L719.0 535.7"/><path class="jb" d="M560.9 569.9L719.0 536.5"/><path class="uc" d="M560.9 569.7L719.0 536.3"/><rect class="mn" x="589.7" y="329.1" width="5.6" height="5.6"/><circle cx="592.5" cy="332.1" r="1.4" fill="#1d1420"/><path class="ja" d="M537.2 424.1L695.3 390.8"/><path class="jb" d="M537.2 424.9L695.3 391.6"/><path class="uc" d="M537.2 424.7L695.3 391.4"/><path class="ca" d="M766.5 478.7L766.5 409.3"/><path class="cb" d="M764.6 478.7L764.6 409.3"/><path class="cc" d="M767.6 478.7L767.6 409.3"/><path class="ca" d="M513.4 646.2L513.4 556.7"/><path class="cb" d="M511.5 646.2L511.5 556.7"/><path class="cc" d="M514.6 646.2L514.6 556.7"/><path class="ma" d="M592.5 401.3L513.4 487.3"/><path class="mb" d="M591.7 400.9L512.6 486.9"/><path d="M508.8 644.6L513.0 642.4L518.0 644.4L517.6 649.0L513.2 651.2L509.2 648.8Z" fill="#ee1c24" stroke="#f23a40" stroke-width="1.2" stroke-linejoin="round"/><path d="M511.6 645.8L514.0 647.4" stroke="#fbd0d0" stroke-width="1.1"/><path class="ja" d="M560.9 499.7L719.0 466.3"/><path class="jb" d="M560.9 500.5L719.0 467.1"/><path class="uc" d="M560.9 500.3L719.0 466.9"/><path class="ja" d="M584.6 575.2L742.7 541.9"/><path class="jb" d="M584.6 576.0L742.7 542.7"/><path class="uc" d="M584.6 575.8L742.7 542.5"/><path class="ca" d="M766.5 409.3L766.5 339.9"/><path class="cb" d="M764.6 409.3L764.6 339.9"/><path class="cc" d="M767.6 409.3L767.6 339.9"/><path class="ma" d="M592.5 331.9L513.4 417.9"/><path class="mb" d="M591.7 331.5L512.6 417.5"/><path class="ca" d="M513.4 556.7L513.4 487.3"/><path class="cb" d="M511.5 556.7L511.5 487.3"/><path class="cc" d="M514.6 556.7L514.6 487.3"/><path class="ja" d="M560.9 430.3L719.0 396.9"/><path class="jb" d="M560.9 431.1L719.0 397.7"/><path class="uc" d="M560.9 430.9L719.0 397.5"/><path class="va" d="M766.5 548.1L861.4 572.8"/><path class="vb" d="M766.5 547.5L861.4 572.1"/><rect class="mk" x="788.5" y="551.8" width="3.4" height="4.6"/><rect class="mk" x="812.2" y="558.0" width="3.4" height="4.6"/><rect class="mk" x="835.9" y="564.2" width="3.4" height="4.6"/><rect class="mn" x="764.5" y="545.8" width="4.0" height="4.6"/><path class="ja" d="M584.6 505.8L742.7 472.5"/><path class="jb" d="M584.6 506.6L742.7 473.3"/><path class="uc" d="M584.6 506.4L742.7 473.1"/><path class="ca" d="M513.4 487.3L513.4 417.9"/><path class="cb" d="M511.5 487.3L511.5 417.9"/><path class="cc" d="M514.6 487.3L514.6 417.9"/><path class="va" d="M766.5 478.7L861.4 503.4"/><path class="vb" d="M766.5 478.1L861.4 502.8"/><path class="ua" d="M608.3 581.4L766.5 548.1"/><path class="ub" d="M608.3 582.3L766.5 549.0"/><path class="uc" d="M608.3 582.1L766.5 548.8"/><rect class="mk" x="788.5" y="482.4" width="3.4" height="4.6"/><rect class="mk" x="812.2" y="488.6" width="3.4" height="4.6"/><rect class="mk" x="835.9" y="494.8" width="3.4" height="4.6"/><rect class="mn" x="764.5" y="476.4" width="4.0" height="4.6"/><path class="ja" d="M584.6 436.4L742.7 403.1"/><path class="jb" d="M584.6 437.2L742.7 403.9"/><path class="uc" d="M584.6 437.0L742.7 403.7"/><path class="ca" d="M513.4 417.9L513.4 348.5"/><path class="cb" d="M511.5 417.9L511.5 348.5"/><path class="cc" d="M514.6 417.9L514.6 348.5"/><path class="va" d="M766.5 409.3L861.4 433.9"/><path class="vb" d="M766.5 408.7L861.4 433.3"/><path class="ua" d="M608.3 512.0L766.5 478.7"/><path class="ub" d="M608.3 512.9L766.5 479.6"/><path class="uc" d="M608.3 512.7L766.5 479.4"/><rect class="mk" x="788.5" y="413.0" width="3.4" height="4.6"/><rect class="mk" x="812.2" y="419.2" width="3.4" height="4.6"/><rect class="mk" x="835.9" y="425.4" width="3.4" height="4.6"/><path class="va" d="M513.4 556.7L608.3 581.4"/><path class="vb" d="M513.4 556.1L608.3 580.8"/><rect class="mn" x="764.5" y="407.0" width="4.0" height="4.6"/><rect class="mk" x="535.5" y="560.5" width="3.4" height="4.6"/><rect class="mk" x="559.2" y="566.7" width="3.4" height="4.6"/><rect class="mk" x="582.9" y="572.8" width="3.4" height="4.6"/><rect class="mn" x="511.4" y="554.4" width="4.0" height="4.6"/><path class="ca" d="M861.4 662.2L861.4 572.8"/><path class="cb" d="M859.5 662.2L859.5 572.8"/><path class="cc" d="M862.5 662.2L862.5 572.8"/><path class="ja" d="M632.1 587.6L790.2 554.2"/><path class="jb" d="M632.1 588.4L790.2 555.0"/><path class="uc" d="M632.1 588.2L790.2 554.8"/><path d="M856.8 660.6L861.0 658.5L866.0 660.5L865.6 665.0L861.2 667.2L857.2 664.9Z" fill="#ee1c24" stroke="#f23a40" stroke-width="1.2" stroke-linejoin="round"/><path d="M859.6 661.9L862.0 663.5" stroke="#fbd0d0" stroke-width="1.1"/><path class="va" d="M766.5 339.9L861.4 364.6"/><path class="vb" d="M766.5 339.3L861.4 363.9"/><path class="ua" d="M608.3 442.6L766.5 409.3"/><path class="ub" d="M608.3 443.5L766.5 410.2"/><path class="uc" d="M608.3 443.3L766.5 410.0"/><rect class="mk" x="788.5" y="343.6" width="3.4" height="4.6"/><rect class="mk" x="835.9" y="356.0" width="3.4" height="4.6"/><rect class="mk" x="812.2" y="349.8" width="3.4" height="4.6"/><path class="va" d="M513.4 487.3L608.3 512.0"/><path class="vb" d="M513.4 486.7L608.3 511.4"/><path class="ua" d="M355.3 590.1L513.4 556.7"/><path class="ub" d="M355.3 591.0L513.4 557.6"/><path class="uc" d="M355.3 590.8L513.4 557.4"/><rect class="mn" x="764.5" y="337.6" width="4.0" height="4.6"/><rect class="mk" x="559.2" y="497.3" width="3.4" height="4.6"/><rect class="mk" x="535.5" y="491.1" width="3.4" height="4.6"/><rect class="mk" x="582.9" y="503.4" width="3.4" height="4.6"/><rect class="mn" x="511.4" y="485.0" width="4.0" height="4.6"/><path class="ja" d="M632.1 518.2L790.2 484.8"/><path class="jb" d="M632.1 519.0L790.2 485.6"/><path class="uc" d="M632.1 518.8L790.2 485.4"/><path class="ca" d="M861.4 572.8L861.4 503.4"/><path class="cb" d="M859.5 572.8L859.5 503.4"/><path class="cc" d="M862.5 572.8L862.5 503.4"/><path class="la" d="M908.8 585.1L861.4 662.2"/><path class="lb" d="M908.1 585.1L860.7 662.2"/><path class="ua" d="M608.3 373.2L766.5 339.9"/><path class="ub" d="M608.3 374.1L766.5 340.8"/><path class="uc" d="M608.3 373.9L766.5 340.6"/><path class="ja" d="M655.8 593.7L813.9 560.4"/><path class="jb" d="M655.8 594.5L813.9 561.2"/><path class="uc" d="M655.8 594.3L813.9 561.0"/><path class="va" d="M513.4 417.9L608.3 442.6"/><path class="vb" d="M513.4 417.3L608.3 442.0"/><path class="ua" d="M355.3 520.7L513.4 487.3"/><path class="ub" d="M355.3 521.6L513.4 488.2"/><path class="uc" d="M355.3 521.4L513.4 488.0"/><rect class="mk" x="535.5" y="421.7" width="3.4" height="4.6"/><rect class="mk" x="559.2" y="427.9" width="3.4" height="4.6"/><rect class="mk" x="582.9" y="434.0" width="3.4" height="4.6"/><rect class="mn" x="511.4" y="415.6" width="4.0" height="4.6"/><path class="ja" d="M632.1 448.8L790.2 415.4"/><path class="jb" d="M632.1 449.6L790.2 416.2"/><path class="uc" d="M632.1 449.4L790.2 416.0"/><path class="ca" d="M861.4 503.4L861.4 433.9"/><path class="cb" d="M859.5 503.4L859.5 433.9"/><path class="cc" d="M862.5 503.4L862.5 433.9"/><path class="ca" d="M608.3 670.9L608.3 581.4"/><path class="cb" d="M606.4 670.9L606.4 581.4"/><path class="cc" d="M609.5 670.9L609.5 581.4"/><path class="ja" d="M379.0 596.2L537.2 562.9"/><path class="jb" d="M379.0 597.0L537.2 563.7"/><path class="uc" d="M379.0 596.8L537.2 563.5"/><path d="M603.7 669.3L607.9 667.1L612.9 669.1L612.5 673.7L608.1 675.9L604.1 673.5Z" fill="#ee1c24" stroke="#f23a40" stroke-width="1.2" stroke-linejoin="round"/><path d="M606.5 670.5L608.9 672.1" stroke="#fbd0d0" stroke-width="1.1"/><path class="ja" d="M655.8 524.3L813.9 491.0"/><path class="jb" d="M655.8 525.1L813.9 491.8"/><path class="uc" d="M655.8 524.9L813.9 491.6"/><path class="va" d="M513.4 348.5L608.3 373.2"/><path class="vb" d="M513.4 347.9L608.3 372.6"/><path class="la" d="M908.8 515.7L861.4 572.8"/><path class="lb" d="M908.1 515.7L860.7 572.8"/><path class="ua" d="M355.3 451.3L513.4 417.9"/><path class="ub" d="M355.3 452.2L513.4 418.8"/><path class="uc" d="M355.3 452.0L513.4 418.6"/><rect class="mk" x="535.5" y="352.3" width="3.4" height="4.6"/><rect class="mk" x="559.2" y="358.5" width="3.4" height="4.6"/><rect class="mk" x="582.9" y="364.6" width="3.4" height="4.6"/><rect class="mn" x="511.4" y="346.2" width="4.0" height="4.6"/><path class="ja" d="M679.5 599.9L837.6 566.6"/><path class="jb" d="M679.5 600.7L837.6 567.4"/><path class="uc" d="M679.5 600.5L837.6 567.2"/><path class="ca" d="M861.4 433.9L861.4 364.6"/><path class="cb" d="M859.5 433.9L859.5 364.6"/><path class="cc" d="M862.5 433.9L862.5 364.6"/><path class="ja" d="M379.0 526.8L537.2 493.5"/><path class="jb" d="M379.0 527.6L537.2 494.3"/><path class="uc" d="M379.0 527.4L537.2 494.1"/><path class="ca" d="M608.3 581.4L608.3 512.0"/><path class="cb" d="M606.4 581.4L606.4 512.0"/><path class="cc" d="M609.5 581.4L609.5 512.0"/><path class="ja" d="M655.8 454.9L813.9 421.6"/><path class="jb" d="M655.8 455.7L813.9 422.4"/><path class="uc" d="M655.8 455.5L813.9 422.2"/><path class="va" d="M861.4 572.8L956.3 597.4"/><path class="vb" d="M861.4 572.1L956.3 596.8"/><path class="la" d="M908.8 446.3L861.4 503.4"/><path class="lb" d="M908.1 446.3L860.7 503.4"/><rect class="mk" x="883.4" y="576.5" width="3.4" height="4.6"/><rect class="mk" x="907.1" y="582.7" width="3.4" height="4.6"/><rect class="mk" x="930.8" y="588.9" width="3.4" height="4.6"/><path class="ua" d="M355.3 381.9L513.4 348.5"/><path class="ub" d="M355.3 382.8L513.4 349.4"/><path class="uc" d="M355.3 382.6L513.4 349.2"/><path class="ja" d="M402.8 602.4L560.9 569.1"/><path class="jb" d="M402.8 603.2L560.9 569.9"/><path class="uc" d="M402.8 603.0L560.9 569.7"/><rect class="mn" x="859.4" y="570.5" width="4.0" height="4.6"/><rect class="mn" x="906.0" y="582.3" width="5.6" height="5.6"/><circle cx="908.8" cy="585.3" r="1.4" fill="#1d1420"/><path class="ja" d="M679.5 530.5L837.6 497.2"/><path class="jb" d="M679.5 531.3L837.6 498.0"/><path class="uc" d="M679.5 531.1L837.6 497.8"/><path class="ja" d="M379.0 457.4L537.2 424.1"/><path class="jb" d="M379.0 458.2L537.2 424.9"/><path class="uc" d="M379.0 458.0L537.2 424.7"/><path class="ca" d="M608.3 512.0L608.3 442.6"/><path class="cb" d="M606.4 512.0L606.4 442.6"/><path class="cc" d="M609.5 512.0L609.5 442.6"/><path class="ca" d="M355.3 679.6L355.3 590.1"/><path class="cb" d="M353.4 679.6L353.4 590.1"/><path class="cc" d="M356.5 679.6L356.5 590.1"/><path class="la" d="M908.8 585.1L956.3 686.9"/><path class="lb" d="M908.1 585.1L955.6 686.9"/><path d="M350.7 678.0L354.9 675.8L359.9 677.8L359.5 682.4L355.1 684.6L351.1 682.2Z" fill="#ee1c24" stroke="#f23a40" stroke-width="1.2" stroke-linejoin="round"/><path d="M353.5 679.2L355.9 680.8" stroke="#fbd0d0" stroke-width="1.1"/><path class="va" d="M861.4 503.4L956.3 528.0"/><path class="vb" d="M861.4 502.8L956.3 527.4"/><path class="la" d="M908.8 376.9L861.4 433.9"/><path class="lb" d="M908.1 376.9L860.7 433.9"/><path class="ua" d="M703.2 606.1L861.4 572.8"/><path class="ub" d="M703.2 607.0L861.4 573.6"/><path class="uc" d="M703.2 606.8L861.4 573.5"/><rect class="mk" x="907.1" y="513.3" width="3.4" height="4.6"/><rect class="mk" x="883.4" y="507.1" width="3.4" height="4.6"/><rect class="mk" x="930.8" y="519.5" width="3.4" height="4.6"/><path class="ja" d="M402.8 533.0L560.9 499.7"/><path class="jb" d="M402.8 533.8L560.9 500.5"/><path class="uc" d="M402.8 533.6L560.9 500.3"/><rect class="mn" x="859.4" y="501.1" width="4.0" height="4.6"/><rect class="mn" x="906.0" y="512.9" width="5.6" height="5.6"/><circle cx="908.8" cy="515.9" r="1.4" fill="#1d1420"/><path class="ja" d="M679.5 461.1L837.6 427.8"/><path class="jb" d="M679.5 461.9L837.6 428.6"/><path class="uc" d="M679.5 461.7L837.6 428.4"/><path class="ja" d="M426.5 608.6L584.6 575.2"/><path class="jb" d="M426.5 609.4L584.6 576.0"/><path class="uc" d="M426.5 609.2L584.6 575.8"/><path class="ca" d="M608.3 442.6L608.3 373.2"/><path class="cb" d="M606.4 442.6L606.4 373.2"/><path class="cc" d="M609.5 442.6L609.5 373.2"/><path class="ca" d="M355.3 590.1L355.3 520.7"/><path class="cb" d="M353.4 590.1L353.4 520.7"/><path class="cc" d="M356.5 590.1L356.5 520.7"/><path class="va" d="M861.4 433.9L956.3 458.6"/><path class="vb" d="M861.4 433.3L956.3 458.0"/><path class="ua" d="M703.2 536.7L861.4 503.4"/><path class="ub" d="M703.2 537.6L861.4 504.2"/><path class="uc" d="M703.2 537.4L861.4 504.1"/><rect class="mk" x="883.4" y="437.7" width="3.4" height="4.6"/><rect class="mk" x="907.1" y="443.9" width="3.4" height="4.6"/><rect class="mk" x="930.8" y="450.1" width="3.4" height="4.6"/><path class="la" d="M908.8 515.7L956.3 597.4"/><path class="lb" d="M908.1 515.7L955.6 597.4"/><path class="ja" d="M402.8 463.6L560.9 430.3"/><path class="jb" d="M402.8 464.4L560.9 431.1"/><path class="uc" d="M402.8 464.2L560.9 430.9"/><path class="va" d="M608.3 581.4L703.2 606.1"/><path class="vb" d="M608.3 580.8L703.2 605.5"/><rect class="mn" x="859.4" y="431.6" width="4.0" height="4.6"/><rect class="mk" x="630.4" y="585.2" width="3.4" height="4.6"/><rect class="mk" x="654.1" y="591.3" width="3.4" height="4.6"/><rect class="mk" x="677.8" y="597.5" width="3.4" height="4.6"/><rect class="mn" x="906.0" y="443.5" width="5.6" height="5.6"/><circle cx="908.8" cy="446.5" r="1.4" fill="#1d1420"/><rect class="mn" x="606.3" y="579.1" width="4.0" height="4.6"/><path class="ca" d="M956.3 686.9L956.3 597.4"/><path class="cb" d="M954.4 686.9L954.4 597.4"/><path class="cc" d="M957.4 686.9L957.4 597.4"/><path class="ja" d="M727.0 612.2L885.1 578.9"/><path class="jb" d="M727.0 613.0L885.1 579.7"/><path class="uc" d="M727.0 612.8L885.1 579.5"/><path class="ja" d="M426.5 539.2L584.6 505.8"/><path class="jb" d="M426.5 540.0L584.6 506.6"/><path class="uc" d="M426.5 539.8L584.6 506.4"/><path class="da" d="M276.3 606.7L355.3 679.6"/><path d="M952.1 685.5L956.3 683.9L960.5 685.5L960.3 689.9L956.3 691.5L952.3 689.9Z" fill="#ffffff" stroke="#c23a48" stroke-width="1" stroke-linejoin="round"/><path d="M956.3 684.3V691.1" stroke="#d9808a" stroke-width="0.8"/><path class="ca" d="M355.3 520.7L355.3 451.3"/><path class="cb" d="M353.4 520.7L353.4 451.3"/><path class="cc" d="M356.5 520.7L356.5 451.3"/><path class="va" d="M861.4 364.6L956.3 389.2"/><path class="vb" d="M861.4 363.9L956.3 388.6"/><path class="ua" d="M703.2 467.3L861.4 433.9"/><path class="ub" d="M703.2 468.2L861.4 434.8"/><path class="uc" d="M703.2 468.0L861.4 434.6"/><rect class="mk" x="907.1" y="374.5" width="3.4" height="4.6"/><rect class="mk" x="883.4" y="368.3" width="3.4" height="4.6"/><rect class="mk" x="930.8" y="380.7" width="3.4" height="4.6"/><path class="la" d="M908.8 446.3L956.3 528.0"/><path class="lb" d="M908.1 446.3L955.6 528.0"/><path class="va" d="M608.3 512.0L703.2 536.7"/><path class="vb" d="M608.3 511.4L703.2 536.1"/><path class="ua" d="M450.2 614.7L608.3 581.4"/><path class="ub" d="M450.2 615.6L608.3 582.3"/><path class="uc" d="M450.2 615.4L608.3 582.1"/><rect class="mn" x="859.4" y="362.2" width="4.0" height="4.6"/><rect class="mk" x="630.4" y="515.8" width="3.4" height="4.6"/><rect class="mk" x="654.1" y="521.9" width="3.4" height="4.6"/><rect class="mk" x="677.8" y="528.1" width="3.4" height="4.6"/><rect class="mn" x="906.0" y="374.1" width="5.6" height="5.6"/><circle cx="908.8" cy="377.1" r="1.4" fill="#1d1420"/><rect class="mn" x="606.3" y="509.7" width="4.0" height="4.6"/><path class="ja" d="M727.0 542.8L885.1 509.5"/><path class="jb" d="M727.0 543.6L885.1 510.3"/><path class="uc" d="M727.0 543.4L885.1 510.1"/><path class="ja" d="M426.5 469.8L584.6 436.4"/><path class="jb" d="M426.5 470.6L584.6 437.2"/><path class="uc" d="M426.5 470.4L584.6 437.0"/><path class="ca" d="M956.3 597.4L956.3 528.0"/><path class="cb" d="M954.4 597.4L954.4 528.0"/><path class="cc" d="M957.4 597.4L957.4 528.0"/><path class="ca" d="M355.3 451.3L355.3 381.9"/><path class="cb" d="M353.4 451.3L353.4 381.9"/><path class="cc" d="M356.5 451.3L356.5 381.9"/><path class="da" d="M276.3 537.3L355.3 590.1"/><path class="ua" d="M703.2 397.9L861.4 364.6"/><path class="ub" d="M703.2 398.8L861.4 365.4"/><path class="uc" d="M703.2 398.6L861.4 365.2"/><path class="la" d="M908.8 376.9L956.3 458.6"/><path class="lb" d="M908.1 376.9L955.6 458.6"/><path class="ja" d="M750.7 618.4L908.8 585.1"/><path class="jb" d="M750.7 619.2L908.8 585.9"/><path class="uc" d="M750.7 619.0L908.8 585.7"/><path class="va" d="M608.3 442.6L703.2 467.3"/><path class="vb" d="M608.3 442.0L703.2 466.7"/><path class="ua" d="M450.2 545.3L608.3 512.0"/><path class="ub" d="M450.2 546.2L608.3 512.9"/><path class="uc" d="M450.2 546.0L608.3 512.7"/><rect class="mk" x="630.4" y="446.4" width="3.4" height="4.6"/><rect class="mk" x="654.1" y="452.5" width="3.4" height="4.6"/><rect class="mk" x="677.8" y="458.7" width="3.4" height="4.6"/><path class="va" d="M355.3 590.1L450.2 614.7"/><path class="vb" d="M355.3 589.5L450.2 614.1"/><rect class="mn" x="606.3" y="440.3" width="4.0" height="4.6"/><rect class="mk" x="377.3" y="593.8" width="3.4" height="4.6"/><rect class="mk" x="401.1" y="600.0" width="3.4" height="4.6"/><rect class="mk" x="424.8" y="606.2" width="3.4" height="4.6"/><rect class="mn" x="353.3" y="587.8" width="4.0" height="4.6"/><path class="da" d="M877.2 614.1L956.3 686.9"/><path class="ja" d="M727.0 473.4L885.1 440.1"/><path class="jb" d="M727.0 474.2L885.1 440.9"/><path class="uc" d="M727.0 474.0L885.1 440.7"/><path class="ca" d="M956.3 528.0L956.3 458.6"/><path class="cb" d="M954.4 528.0L954.4 458.6"/><path class="cc" d="M957.4 528.0L957.4 458.6"/><path class="ca" d="M703.2 695.6L703.2 606.1"/><path class="cb" d="M701.3 695.6L701.3 606.1"/><path class="cc" d="M704.4 695.6L704.4 606.1"/><path class="ja" d="M473.9 620.9L632.1 587.6"/><path class="jb" d="M473.9 621.7L632.1 588.4"/><path class="uc" d="M473.9 621.5L632.1 588.2"/><path class="da" d="M276.3 467.9L355.3 520.7"/><path d="M699.0 694.2L703.2 692.6L707.4 694.2L707.2 698.6L703.2 700.2L699.2 698.6Z" fill="#ffffff" stroke="#c23a48" stroke-width="1" stroke-linejoin="round"/><path d="M703.2 693.0V699.8" stroke="#d9808a" stroke-width="0.8"/><path class="ja" d="M750.7 549.0L908.8 515.7"/><path class="jb" d="M750.7 549.8L908.8 516.5"/><path class="uc" d="M750.7 549.6L908.8 516.3"/><path class="va" d="M608.3 373.2L703.2 397.9"/><path class="vb" d="M608.3 372.6L703.2 397.3"/><path class="ua" d="M450.2 475.9L608.3 442.6"/><path class="ub" d="M450.2 476.8L608.3 443.5"/><path class="uc" d="M450.2 476.6L608.3 443.3"/><rect class="mk" x="630.4" y="377.0" width="3.4" height="4.6"/><rect class="mk" x="654.1" y="383.1" width="3.4" height="4.6"/><rect class="mk" x="677.8" y="389.3" width="3.4" height="4.6"/><path class="va" d="M355.3 520.7L450.2 545.3"/><path class="vb" d="M355.3 520.1L450.2 544.7"/><path class="ua" d="M197.2 623.4L355.3 590.1"/><path class="ub" d="M197.2 624.3L355.3 591.0"/><path class="uc" d="M197.2 624.1L355.3 590.8"/><rect class="mn" x="606.3" y="370.9" width="4.0" height="4.6"/><rect class="mk" x="377.3" y="524.4" width="3.4" height="4.6"/><rect class="mk" x="401.1" y="530.6" width="3.4" height="4.6"/><rect class="mk" x="424.8" y="536.8" width="3.4" height="4.6"/><rect class="mn" x="353.3" y="518.4" width="4.0" height="4.6"/><rect class="mn" x="273.5" y="603.9" width="5.6" height="5.6"/><circle cx="276.3" cy="606.9" r="1.4" fill="#1d1420"/><path class="ja" d="M774.4 624.6L932.5 591.3"/><path class="jb" d="M774.4 625.4L932.5 592.1"/><path class="uc" d="M774.4 625.2L932.5 591.9"/><path class="ca" d="M956.3 458.6L956.3 389.2"/><path class="cb" d="M954.4 458.6L954.4 389.2"/><path class="cc" d="M957.4 458.6L957.4 389.2"/><path class="da" d="M877.2 544.7L956.3 597.4"/><path class="ja" d="M473.9 551.5L632.1 518.2"/><path class="jb" d="M473.9 552.3L632.1 519.0"/><path class="uc" d="M473.9 552.1L632.1 518.8"/><path class="ca" d="M703.2 606.1L703.2 536.7"/><path class="cb" d="M701.3 606.1L701.3 536.7"/><path class="cc" d="M704.4 606.1L704.4 536.7"/><path class="da" d="M276.3 398.5L355.3 451.3"/><path class="ja" d="M750.7 479.6L908.8 446.3"/><path class="jb" d="M750.7 480.4L908.8 447.1"/><path class="uc" d="M750.7 480.2L908.8 446.9"/><path class="ua" d="M450.2 406.5L608.3 373.2"/><path class="ub" d="M450.2 407.4L608.3 374.1"/><path class="uc" d="M450.2 407.2L608.3 373.9"/><path class="ja" d="M497.7 627.1L655.8 593.7"/><path class="jb" d="M497.7 627.9L655.8 594.5"/><path class="uc" d="M497.7 627.7L655.8 594.3"/><path class="va" d="M355.3 451.3L450.2 475.9"/><path class="vb" d="M355.3 450.7L450.2 475.3"/><rect class="mn" x="954.3" y="595.1" width="4.0" height="4.6"/><path class="ua" d="M197.2 554.0L355.3 520.7"/><path class="ub" d="M197.2 554.9L355.3 521.6"/><path class="uc" d="M197.2 554.7L355.3 521.4"/><rect class="mk" x="377.3" y="455.0" width="3.4" height="4.6"/><rect class="mk" x="401.1" y="461.2" width="3.4" height="4.6"/><rect class="mk" x="424.8" y="467.4" width="3.4" height="4.6"/><rect class="mn" x="353.3" y="449.0" width="4.0" height="4.6"/><rect class="mn" x="273.5" y="534.5" width="5.6" height="5.6"/><circle cx="276.3" cy="537.5" r="1.4" fill="#1d1420"/><path class="ja" d="M774.4 555.2L932.5 521.9"/><path class="jb" d="M774.4 556.0L932.5 522.7"/><path class="uc" d="M774.4 555.8L932.5 522.5"/><path class="da" d="M877.2 475.3L956.3 528.0"/><path class="ja" d="M473.9 482.1L632.1 448.8"/><path class="jb" d="M473.9 482.9L632.1 449.6"/><path class="uc" d="M473.9 482.7L632.1 449.4"/><path class="ca" d="M703.2 536.7L703.2 467.3"/><path class="cb" d="M701.3 536.7L701.3 467.3"/><path class="cc" d="M704.4 536.7L704.4 467.3"/><path class="ca" d="M450.2 704.2L450.2 614.7"/><path class="cb" d="M448.3 704.2L448.3 614.7"/><path class="cc" d="M451.4 704.2L451.4 614.7"/><path class="ma" d="M276.3 606.7L197.2 712.9"/><path class="mb" d="M275.5 606.3L196.4 712.5"/><path class="ja" d="M220.9 629.6L379.0 596.2"/><path class="jb" d="M220.9 630.4L379.0 597.0"/><path class="uc" d="M220.9 630.2L379.0 596.8"/><path d="M446.0 702.8L450.2 701.2L454.4 702.8L454.2 707.2L450.2 708.8L446.2 707.2Z" fill="#ffffff" stroke="#c23a48" stroke-width="1" stroke-linejoin="round"/><path d="M450.2 701.6V708.4" stroke="#d9808a" stroke-width="0.8"/><path class="ua" d="M798.1 630.8L956.3 597.4"/><path class="ub" d="M798.1 631.6L956.3 598.3"/><path class="uc" d="M798.1 631.5L956.3 598.1"/><path class="ja" d="M497.7 557.7L655.8 524.3"/><path class="jb" d="M497.7 558.5L655.8 525.1"/><path class="uc" d="M497.7 558.3L655.8 524.9"/><path class="va" d="M355.3 381.9L450.2 406.5"/><path class="vb" d="M355.3 381.3L450.2 405.9"/><rect class="mn" x="954.3" y="525.7" width="4.0" height="4.6"/><path class="ua" d="M197.2 484.6L355.3 451.3"/><path class="ub" d="M197.2 485.5L355.3 452.2"/><path class="uc" d="M197.2 485.3L355.3 452.0"/><rect class="mk" x="377.3" y="385.6" width="3.4" height="4.6"/><rect class="mk" x="401.1" y="391.8" width="3.4" height="4.6"/><rect class="mk" x="424.8" y="398.0" width="3.4" height="4.6"/><rect class="mn" x="874.4" y="611.3" width="5.6" height="5.6"/><circle cx="877.2" cy="614.3" r="1.4" fill="#1d1420"/><rect class="mn" x="353.3" y="379.6" width="4.0" height="4.6"/><rect class="mn" x="273.5" y="465.1" width="5.6" height="5.6"/><circle cx="276.3" cy="468.1" r="1.4" fill="#1d1420"/><path class="ja" d="M774.4 485.8L932.5 452.5"/><path class="jb" d="M774.4 486.6L932.5 453.3"/><path class="uc" d="M774.4 486.4L932.5 453.1"/><path class="da" d="M877.2 405.9L956.3 458.6"/><path class="ja" d="M521.4 633.2L679.5 599.9"/><path class="jb" d="M521.4 634.0L679.5 600.7"/><path class="uc" d="M521.4 633.8L679.5 600.5"/><path class="ca" d="M703.2 467.3L703.2 397.9"/><path class="cb" d="M701.3 467.3L701.3 397.9"/><path class="cc" d="M704.4 467.3L704.4 397.9"/><path class="ja" d="M220.9 560.2L379.0 526.8"/><path class="jb" d="M220.9 561.0L379.0 527.6"/><path class="uc" d="M220.9 560.8L379.0 527.4"/><path class="ca" d="M450.2 614.7L450.2 545.3"/><path class="cb" d="M448.3 614.7L448.3 545.3"/><path class="cc" d="M451.4 614.7L451.4 545.3"/><path class="ma" d="M276.3 537.3L197.2 623.4"/><path class="mb" d="M275.5 536.9L196.4 623.0"/><path class="ua" d="M798.1 561.4L956.3 528.0"/><path class="ub" d="M798.1 562.2L956.3 528.9"/><path class="uc" d="M798.1 562.1L956.3 528.7"/><path class="ja" d="M497.7 488.3L655.8 454.9"/><path class="jb" d="M497.7 489.1L655.8 455.7"/><path class="uc" d="M497.7 488.9L655.8 455.5"/><path class="va" d="M703.2 606.1L798.1 630.8"/><path class="vb" d="M703.2 605.5L798.1 630.1"/><rect class="mn" x="954.3" y="456.3" width="4.0" height="4.6"/><rect class="mk" x="749.0" y="616.0" width="3.4" height="4.6"/><rect class="mk" x="725.3" y="609.8" width="3.4" height="4.6"/><rect class="mk" x="772.7" y="622.2" width="3.4" height="4.6"/><path class="ua" d="M197.2 415.2L355.3 381.9"/><path class="ub" d="M197.2 416.1L355.3 382.8"/><path class="uc" d="M197.2 415.9L355.3 382.6"/><path class="ja" d="M244.6 635.7L402.8 602.4"/><path class="jb" d="M244.6 636.5L402.8 603.2"/><path class="uc" d="M244.6 636.3L402.8 603.0"/><rect class="mn" x="874.4" y="541.9" width="5.6" height="5.6"/><circle cx="877.2" cy="544.9" r="1.4" fill="#1d1420"/><rect class="mn" x="701.2" y="603.8" width="4.0" height="4.6"/><rect class="mn" x="273.5" y="395.7" width="5.6" height="5.6"/><circle cx="276.3" cy="398.7" r="1.4" fill="#1d1420"/><path class="ma" d="M877.2 614.1L798.1 720.2"/><path class="mb" d="M876.4 613.7L797.3 719.9"/><path class="ja" d="M521.4 563.8L679.5 530.5"/><path class="jb" d="M521.4 564.6L679.5 531.3"/><path class="uc" d="M521.4 564.4L679.5 531.1"/><path class="ja" d="M220.9 490.8L379.0 457.4"/><path class="jb" d="M220.9 491.6L379.0 458.2"/><path class="uc" d="M220.9 491.4L379.0 458.0"/><path class="ca" d="M450.2 545.3L450.2 475.9"/><path class="cb" d="M448.3 545.3L448.3 475.9"/><path class="cc" d="M451.4 545.3L451.4 475.9"/><path class="ca" d="M197.2 712.9L197.2 623.4"/><path class="cb" d="M195.3 712.9L195.3 623.4"/><path class="cc" d="M198.3 712.9L198.3 623.4"/><path class="ma" d="M276.3 467.9L197.2 554.0"/><path class="mb" d="M275.5 467.5L196.4 553.6"/><path class="ua" d="M798.1 491.9L956.3 458.6"/><path class="ub" d="M798.1 492.8L956.3 459.5"/><path class="uc" d="M798.1 492.6L956.3 459.3"/><path d="M193.0 711.5L197.2 709.9L201.4 711.5L201.2 715.9L197.2 717.5L193.2 715.9Z" fill="#ffffff" stroke="#c23a48" stroke-width="1" stroke-linejoin="round"/><path d="M197.2 710.3V717.1" stroke="#d9808a" stroke-width="0.8"/><path class="va" d="M703.2 536.7L798.1 561.4"/><path class="vb" d="M703.2 536.1L798.1 560.8"/><path class="ua" d="M545.1 639.4L703.2 606.1"/><path class="ub" d="M545.1 640.3L703.2 607.0"/><path class="uc" d="M545.1 640.1L703.2 606.8"/><rect class="mn" x="954.3" y="386.9" width="4.0" height="4.6"/><rect class="mk" x="749.0" y="546.6" width="3.4" height="4.6"/><rect class="mk" x="725.3" y="540.4" width="3.4" height="4.6"/><rect class="mk" x="772.7" y="552.8" width="3.4" height="4.6"/><path class="ja" d="M244.6 566.3L402.8 533.0"/><path class="jb" d="M244.6 567.1L402.8 533.8"/><path class="uc" d="M244.6 566.9L402.8 533.6"/><rect class="mn" x="874.4" y="472.5" width="5.6" height="5.6"/><circle cx="877.2" cy="475.5" r="1.4" fill="#1d1420"/><rect class="mn" x="701.2" y="534.4" width="4.0" height="4.6"/><path class="ja" d="M521.4 494.4L679.5 461.1"/><path class="jb" d="M521.4 495.2L679.5 461.9"/><path class="uc" d="M521.4 495.0L679.5 461.7"/><path class="ma" d="M877.2 544.7L798.1 630.8"/><path class="mb" d="M876.4 544.3L797.3 630.4"/><path class="ja" d="M268.4 641.9L426.5 608.6"/><path class="jb" d="M268.4 642.7L426.5 609.4"/><path class="uc" d="M268.4 642.5L426.5 609.2"/><path class="ca" d="M450.2 475.9L450.2 406.5"/><path class="cb" d="M448.3 475.9L448.3 406.5"/><path class="cc" d="M451.4 475.9L451.4 406.5"/><path class="ma" d="M276.3 398.5L197.2 484.6"/><path class="mb" d="M275.5 398.1L196.4 484.2"/><path class="ca" d="M197.2 623.4L197.2 554.0"/><path class="cb" d="M195.3 623.4L195.3 554.0"/><path class="cc" d="M198.3 623.4L198.3 554.0"/><path class="ua" d="M798.1 422.6L956.3 389.2"/><path class="ub" d="M798.1 423.4L956.3 390.1"/><path class="uc" d="M798.1 423.2L956.3 389.9"/><path class="va" d="M703.2 467.3L798.1 491.9"/><path class="vb" d="M703.2 466.7L798.1 491.3"/><path class="ua" d="M545.1 570.0L703.2 536.7"/><path class="ub" d="M545.1 570.9L703.2 537.6"/><path class="uc" d="M545.1 570.7L703.2 537.4"/><rect class="mk" x="749.0" y="477.2" width="3.4" height="4.6"/><rect class="mk" x="725.3" y="471.0" width="3.4" height="4.6"/><rect class="mk" x="772.7" y="483.4" width="3.4" height="4.6"/><path class="ja" d="M244.6 496.9L402.8 463.6"/><path class="jb" d="M244.6 497.7L402.8 464.4"/><path class="uc" d="M244.6 497.5L402.8 464.2"/><rect class="mn" x="874.4" y="403.1" width="5.6" height="5.6"/><circle cx="877.2" cy="406.1" r="1.4" fill="#1d1420"/><path class="va" d="M450.2 614.7L545.1 639.4"/><path class="vb" d="M450.2 614.1L545.1 638.8"/><path class="la" d="M244.6 635.7L197.2 712.9"/><path class="lb" d="M243.9 635.7L196.5 712.9"/><rect class="mn" x="701.2" y="465.0" width="4.0" height="4.6"/><rect class="mk" x="472.2" y="618.5" width="3.4" height="4.6"/><rect class="mk" x="496.0" y="624.7" width="3.4" height="4.6"/><rect class="mk" x="519.7" y="630.8" width="3.4" height="4.6"/><rect class="mn" x="448.2" y="612.4" width="4.0" height="4.6"/><path class="ca" d="M798.1 720.2L798.1 630.8"/><path class="cb" d="M796.2 720.2L796.2 630.8"/><path class="cc" d="M799.3 720.2L799.3 630.8"/><path class="ma" d="M877.2 475.3L798.1 561.4"/><path class="mb" d="M876.4 474.9L797.3 561.0"/><path class="ja" d="M568.8 645.6L727.0 612.2"/><path class="jb" d="M568.8 646.4L727.0 613.0"/><path class="uc" d="M568.8 646.2L727.0 612.8"/><path class="ja" d="M268.4 572.5L426.5 539.2"/><path class="jb" d="M268.4 573.3L426.5 540.0"/><path class="uc" d="M268.4 573.1L426.5 539.8"/><path d="M793.5 718.6L797.7 716.5L802.7 718.5L802.3 723.0L797.9 725.2L793.9 722.9Z" fill="#ee1c24" stroke="#f23a40" stroke-width="1.2" stroke-linejoin="round"/><path d="M796.3 719.9L798.7 721.5" stroke="#fbd0d0" stroke-width="1.1"/><path class="ca" d="M197.2 554.0L197.2 484.6"/><path class="cb" d="M195.3 554.0L195.3 484.6"/><path class="cc" d="M198.3 554.0L198.3 484.6"/><path class="va" d="M703.2 397.9L798.1 422.6"/><path class="vb" d="M703.2 397.3L798.1 421.9"/><path class="ua" d="M545.1 500.6L703.2 467.3"/><path class="ub" d="M545.1 501.5L703.2 468.2"/><path class="uc" d="M545.1 501.3L703.2 468.0"/><rect class="mk" x="749.0" y="407.8" width="3.4" height="4.6"/><rect class="mk" x="725.3" y="401.6" width="3.4" height="4.6"/><rect class="mk" x="772.7" y="414.0" width="3.4" height="4.6"/><path class="va" d="M450.2 545.3L545.1 570.0"/><path class="vb" d="M450.2 544.7L545.1 569.4"/><path class="ua" d="M292.1 648.1L450.2 614.7"/><path class="ub" d="M292.1 649.0L450.2 615.6"/><path class="uc" d="M292.1 648.8L450.2 615.4"/><rect class="mn" x="701.2" y="395.6" width="4.0" height="4.6"/><rect class="mk" x="472.2" y="549.1" width="3.4" height="4.6"/><rect class="mk" x="496.0" y="555.3" width="3.4" height="4.6"/><rect class="mk" x="519.7" y="561.4" width="3.4" height="4.6"/><path class="la" d="M244.6 566.3L197.2 623.4"/><path class="lb" d="M243.9 566.3L196.5 623.4"/><rect class="mn" x="448.2" y="543.0" width="4.0" height="4.6"/><path class="ma" d="M877.2 405.9L798.1 491.9"/><path class="mb" d="M876.4 405.5L797.3 491.6"/><path class="ja" d="M568.8 576.2L727.0 542.8"/><path class="jb" d="M568.8 577.0L727.0 543.6"/><path class="uc" d="M568.8 576.8L727.0 543.4"/><path class="ja" d="M268.4 503.1L426.5 469.8"/><path class="jb" d="M268.4 503.9L426.5 470.6"/><path class="uc" d="M268.4 503.7L426.5 470.4"/><path class="ca" d="M798.1 630.8L798.1 561.4"/><path class="cb" d="M796.2 630.8L796.2 561.4"/><path class="cc" d="M799.3 630.8L799.3 561.4"/><path class="ca" d="M197.2 484.6L197.2 415.2"/><path class="cb" d="M195.3 484.6L195.3 415.2"/><path class="cc" d="M198.3 484.6L198.3 415.2"/><path class="ua" d="M545.1 431.2L703.2 397.9"/><path class="ub" d="M545.1 432.1L703.2 398.8"/><path class="uc" d="M545.1 431.9L703.2 398.6"/><path class="ja" d="M592.6 651.7L750.7 618.4"/><path class="jb" d="M592.6 652.5L750.7 619.2"/><path class="uc" d="M592.6 652.3L750.7 619.0"/><path class="va" d="M450.2 475.9L545.1 500.6"/><path class="vb" d="M450.2 475.3L545.1 500.0"/><path class="ua" d="M292.1 578.7L450.2 545.3"/><path class="ub" d="M292.1 579.6L450.2 546.2"/><path class="uc" d="M292.1 579.4L450.2 546.0"/><rect class="mk" x="472.2" y="479.7" width="3.4" height="4.6"/><rect class="mk" x="496.0" y="485.9" width="3.4" height="4.6"/><rect class="mk" x="519.7" y="492.0" width="3.4" height="4.6"/><path class="va" d="M197.2 623.4L292.1 648.1"/><path class="vb" d="M197.2 622.8L292.1 647.5"/><path class="la" d="M244.6 496.9L197.2 554.0"/><path class="lb" d="M243.9 496.9L196.5 554.0"/><rect class="mn" x="448.2" y="473.6" width="4.0" height="4.6"/><rect class="mk" x="266.7" y="639.5" width="3.4" height="4.6"/><rect class="mk" x="219.2" y="627.2" width="3.4" height="4.6"/><rect class="mk" x="242.9" y="633.3" width="3.4" height="4.6"/><rect class="mn" x="195.2" y="621.1" width="4.0" height="4.6"/><rect class="mn" x="241.8" y="632.9" width="5.6" height="5.6"/><circle cx="244.6" cy="635.9" r="1.4" fill="#1d1420"/><path class="ja" d="M568.8 506.8L727.0 473.4"/><path class="jb" d="M568.8 507.6L727.0 474.2"/><path class="uc" d="M568.8 507.4L727.0 474.0"/><path class="ca" d="M798.1 561.4L798.1 491.9"/><path class="cb" d="M796.2 561.4L796.2 491.9"/><path class="cc" d="M799.3 561.4L799.3 491.9"/><path class="ca" d="M545.1 728.9L545.1 639.4"/><path class="cb" d="M543.2 728.9L543.2 639.4"/><path class="cc" d="M546.3 728.9L546.3 639.4"/><path class="ja" d="M315.8 654.2L473.9 620.9"/><path class="jb" d="M315.8 655.0L473.9 621.7"/><path class="uc" d="M315.8 654.8L473.9 621.5"/><path d="M540.9 727.5L545.1 725.9L549.3 727.5L549.1 731.9L545.1 733.5L541.1 731.9Z" fill="#ffffff" stroke="#c23a48" stroke-width="1" stroke-linejoin="round"/><path d="M545.1 726.3V733.1" stroke="#d9808a" stroke-width="0.8"/><path class="ja" d="M592.6 582.3L750.7 549.0"/><path class="jb" d="M592.6 583.1L750.7 549.8"/><path class="uc" d="M592.6 582.9L750.7 549.6"/><path class="va" d="M450.2 406.5L545.1 431.2"/><path class="vb" d="M450.2 405.9L545.1 430.6"/><path class="ua" d="M292.1 509.3L450.2 475.9"/><path class="ub" d="M292.1 510.2L450.2 476.8"/><path class="uc" d="M292.1 510.0L450.2 476.6"/><rect class="mk" x="472.2" y="410.3" width="3.4" height="4.6"/><rect class="mk" x="496.0" y="416.5" width="3.4" height="4.6"/><rect class="mk" x="519.7" y="422.6" width="3.4" height="4.6"/><path class="la" d="M244.6 635.7L292.1 737.6"/><path class="lb" d="M243.9 635.7L291.4 737.6"/><path class="va" d="M197.2 554.0L292.1 578.7"/><path class="vb" d="M197.2 553.4L292.1 578.1"/><path class="la" d="M244.6 427.5L197.2 484.6"/><path class="lb" d="M243.9 427.5L196.5 484.6"/><rect class="mn" x="448.2" y="404.2" width="4.0" height="4.6"/><rect class="mk" x="219.2" y="557.8" width="3.4" height="4.6"/><rect class="mk" x="242.9" y="563.9" width="3.4" height="4.6"/><rect class="mk" x="266.7" y="570.1" width="3.4" height="4.6"/><rect class="mn" x="195.2" y="551.7" width="4.0" height="4.6"/><rect class="mn" x="241.8" y="563.5" width="5.6" height="5.6"/><circle cx="244.6" cy="566.5" r="1.4" fill="#1d1420"/><path class="ja" d="M616.3 657.9L774.4 624.6"/><path class="jb" d="M616.3 658.7L774.4 625.4"/><path class="uc" d="M616.3 658.5L774.4 625.2"/><path class="ca" d="M798.1 491.9L798.1 422.6"/><path class="cb" d="M796.2 491.9L796.2 422.6"/><path class="cc" d="M799.3 491.9L799.3 422.6"/><path class="ja" d="M315.8 584.8L473.9 551.5"/><path class="jb" d="M315.8 585.6L473.9 552.3"/><path class="uc" d="M315.8 585.4L473.9 552.1"/><path class="ca" d="M545.1 639.4L545.1 570.0"/><path class="cb" d="M543.2 639.4L543.2 570.0"/><path class="cc" d="M546.3 639.4L546.3 570.0"/><path class="ja" d="M592.6 512.9L750.7 479.6"/><path class="jb" d="M592.6 513.7L750.7 480.4"/><path class="uc" d="M592.6 513.5L750.7 480.2"/><path class="ua" d="M292.1 439.9L450.2 406.5"/><path class="ub" d="M292.1 440.8L450.2 407.4"/><path class="uc" d="M292.1 440.6L450.2 407.2"/><path class="ja" d="M339.6 660.4L497.7 627.1"/><path class="jb" d="M339.6 661.2L497.7 627.9"/><path class="uc" d="M339.6 661.0L497.7 627.7"/><path class="va" d="M197.2 484.6L292.1 509.3"/><path class="vb" d="M197.2 484.0L292.1 508.7"/><rect class="mn" x="796.1" y="628.5" width="4.0" height="4.6"/><rect class="mk" x="219.2" y="488.4" width="3.4" height="4.6"/><rect class="mk" x="242.9" y="494.5" width="3.4" height="4.6"/><rect class="mk" x="266.7" y="500.7" width="3.4" height="4.6"/><path class="la" d="M244.6 566.3L292.1 648.1"/><path class="lb" d="M243.9 566.3L291.4 648.1"/><rect class="mn" x="195.2" y="482.3" width="4.0" height="4.6"/><rect class="mn" x="241.8" y="494.1" width="5.6" height="5.6"/><circle cx="244.6" cy="497.1" r="1.4" fill="#1d1420"/><path class="ja" d="M616.3 588.5L774.4 555.2"/><path class="jb" d="M616.3 589.3L774.4 556.0"/><path class="uc" d="M616.3 589.1L774.4 555.8"/><path class="ja" d="M315.8 515.4L473.9 482.1"/><path class="jb" d="M315.8 516.2L473.9 482.9"/><path class="uc" d="M315.8 516.0L473.9 482.7"/><path class="ca" d="M545.1 570.0L545.1 500.6"/><path class="cb" d="M543.2 570.0L543.2 500.6"/><path class="cc" d="M546.3 570.0L546.3 500.6"/><path class="ca" d="M292.1 737.6L292.1 648.1"/><path class="cb" d="M290.2 737.6L290.2 648.1"/><path class="cc" d="M293.2 737.6L293.2 648.1"/><path d="M287.5 736.0L291.7 733.8L296.7 735.8L296.3 740.4L291.9 742.6L287.9 740.2Z" fill="#ee1c24" stroke="#f23a40" stroke-width="1.2" stroke-linejoin="round"/><path d="M290.3 737.2L292.7 738.8" stroke="#fbd0d0" stroke-width="1.1"/><path class="ua" d="M640.0 664.1L798.1 630.8"/><path class="ub" d="M640.0 665.0L798.1 631.6"/><path class="uc" d="M640.0 664.8L798.1 631.5"/><path class="ja" d="M339.6 591.0L497.7 557.7"/><path class="jb" d="M339.6 591.8L497.7 558.5"/><path class="uc" d="M339.6 591.6L497.7 558.3"/><path class="va" d="M197.2 415.2L292.1 439.9"/><path class="vb" d="M197.2 414.6L292.1 439.3"/><rect class="mn" x="796.1" y="559.1" width="4.0" height="4.6"/><rect class="mk" x="219.2" y="419.0" width="3.4" height="4.6"/><rect class="mk" x="242.9" y="425.1" width="3.4" height="4.6"/><rect class="mk" x="266.7" y="431.3" width="3.4" height="4.6"/><path class="la" d="M244.6 496.9L292.1 578.7"/><path class="lb" d="M243.9 496.9L291.4 578.7"/><rect class="mn" x="195.2" y="412.9" width="4.0" height="4.6"/><rect class="mn" x="241.8" y="424.7" width="5.6" height="5.6"/><circle cx="244.6" cy="427.7" r="1.4" fill="#1d1420"/><path class="ja" d="M616.3 519.1L774.4 485.8"/><path class="jb" d="M616.3 519.9L774.4 486.6"/><path class="uc" d="M616.3 519.7L774.4 486.4"/><path class="ja" d="M363.3 666.6L521.4 633.2"/><path class="jb" d="M363.3 667.4L521.4 634.0"/><path class="uc" d="M363.3 667.2L521.4 633.8"/><path class="ca" d="M545.1 500.6L545.1 431.2"/><path class="cb" d="M543.2 500.6L543.2 431.2"/><path class="cc" d="M546.3 500.6L546.3 431.2"/><path class="ca" d="M292.1 648.1L292.1 578.7"/><path class="cb" d="M290.2 648.1L290.2 578.7"/><path class="cc" d="M293.2 648.1L293.2 578.7"/><path class="ua" d="M640.0 594.7L798.1 561.4"/><path class="ub" d="M640.0 595.6L798.1 562.2"/><path class="uc" d="M640.0 595.4L798.1 562.1"/><path class="ja" d="M339.6 521.6L497.7 488.3"/><path class="jb" d="M339.6 522.4L497.7 489.1"/><path class="uc" d="M339.6 522.2L497.7 488.9"/><path class="va" d="M545.1 639.4L640.0 664.1"/><path class="vb" d="M545.1 638.8L640.0 663.5"/><rect class="mn" x="796.1" y="489.6" width="4.0" height="4.6"/><rect class="mk" x="567.1" y="643.2" width="3.4" height="4.6"/><rect class="mk" x="590.9" y="649.3" width="3.4" height="4.6"/><rect class="mk" x="614.6" y="655.5" width="3.4" height="4.6"/><path class="la" d="M244.6 427.5L292.1 509.3"/><path class="lb" d="M243.9 427.5L291.4 509.3"/><rect class="mn" x="543.1" y="637.1" width="4.0" height="4.6"/><path class="ja" d="M363.3 597.2L521.4 563.8"/><path class="jb" d="M363.3 598.0L521.4 564.6"/><path class="uc" d="M363.3 597.8L521.4 564.4"/><path class="ca" d="M292.1 578.7L292.1 509.3"/><path class="cb" d="M290.2 578.7L290.2 509.3"/><path class="cc" d="M293.2 578.7L293.2 509.3"/><path class="ua" d="M640.0 525.3L798.1 491.9"/><path class="ub" d="M640.0 526.2L798.1 492.8"/><path class="uc" d="M640.0 526.0L798.1 492.6"/><path class="va" d="M545.1 570.0L640.0 594.7"/><path class="vb" d="M545.1 569.4L640.0 594.1"/><path class="ua" d="M387.0 672.7L545.1 639.4"/><path class="ub" d="M387.0 673.6L545.1 640.3"/><path class="uc" d="M387.0 673.4L545.1 640.1"/><rect class="mn" x="796.1" y="420.2" width="4.0" height="4.6"/><rect class="mk" x="590.9" y="579.9" width="3.4" height="4.6"/><rect class="mk" x="567.1" y="573.8" width="3.4" height="4.6"/><rect class="mk" x="614.6" y="586.1" width="3.4" height="4.6"/><rect class="mn" x="543.1" y="567.7" width="4.0" height="4.6"/><path class="ja" d="M363.3 527.8L521.4 494.4"/><path class="jb" d="M363.3 528.6L521.4 495.2"/><path class="uc" d="M363.3 528.4L521.4 495.0"/><path class="ca" d="M292.1 509.3L292.1 439.9"/><path class="cb" d="M290.2 509.3L290.2 439.9"/><path class="cc" d="M293.2 509.3L293.2 439.9"/><path class="ua" d="M640.0 455.9L798.1 422.6"/><path class="ub" d="M640.0 456.8L798.1 423.4"/><path class="uc" d="M640.0 456.6L798.1 423.2"/><path class="va" d="M545.1 500.6L640.0 525.3"/><path class="vb" d="M545.1 500.0L640.0 524.7"/><path class="ua" d="M387.0 603.3L545.1 570.0"/><path class="ub" d="M387.0 604.2L545.1 570.9"/><path class="uc" d="M387.0 604.0L545.1 570.7"/><rect class="mk" x="567.1" y="504.4" width="3.4" height="4.6"/><rect class="mk" x="590.9" y="510.5" width="3.4" height="4.6"/><rect class="mk" x="614.6" y="516.7" width="3.4" height="4.6"/><path class="va" d="M292.1 648.1L387.0 672.7"/><path class="vb" d="M292.1 647.5L387.0 672.1"/><rect class="mn" x="543.1" y="498.3" width="4.0" height="4.6"/><rect class="mk" x="314.1" y="651.8" width="3.4" height="4.6"/><rect class="mk" x="337.9" y="658.0" width="3.4" height="4.6"/><rect class="mk" x="361.6" y="664.2" width="3.4" height="4.6"/><rect class="mn" x="290.1" y="645.8" width="4.0" height="4.6"/><path class="ca" d="M640.0 753.6L640.0 664.1"/><path class="cb" d="M638.1 753.6L638.1 664.1"/><path class="cc" d="M641.2 753.6L641.2 664.1"/><path class="ja" d="M410.7 678.9L568.8 645.6"/><path class="jb" d="M410.7 679.7L568.8 646.4"/><path class="uc" d="M410.7 679.5L568.8 646.2"/><path d="M635.4 752.0L639.6 749.8L644.6 751.8L644.2 756.4L639.8 758.6L635.8 756.2Z" fill="#ee1c24" stroke="#f23a40" stroke-width="1.2" stroke-linejoin="round"/><path d="M638.2 753.2L640.6 754.8" stroke="#fbd0d0" stroke-width="1.1"/><path class="va" d="M545.1 431.2L640.0 455.9"/><path class="vb" d="M545.1 430.6L640.0 455.3"/><path class="ua" d="M387.0 533.9L545.1 500.6"/><path class="ub" d="M387.0 534.8L545.1 501.5"/><path class="uc" d="M387.0 534.6L545.1 501.3"/><rect class="mk" x="567.1" y="435.0" width="3.4" height="4.6"/><rect class="mk" x="590.9" y="441.1" width="3.4" height="4.6"/><rect class="mk" x="614.6" y="447.3" width="3.4" height="4.6"/><path class="va" d="M292.1 578.7L387.0 603.3"/><path class="vb" d="M292.1 578.1L387.0 602.7"/><rect class="mn" x="543.1" y="428.9" width="4.0" height="4.6"/><rect class="mk" x="314.1" y="582.4" width="3.4" height="4.6"/><rect class="mk" x="337.9" y="588.6" width="3.4" height="4.6"/><rect class="mk" x="361.6" y="594.8" width="3.4" height="4.6"/><rect class="mn" x="290.1" y="576.4" width="4.0" height="4.6"/><path class="ja" d="M410.7 609.5L568.8 576.2"/><path class="jb" d="M410.7 610.3L568.8 577.0"/><path class="uc" d="M410.7 610.1L568.8 576.8"/><path class="ca" d="M640.0 664.1L640.0 594.7"/><path class="cb" d="M638.1 664.1L638.1 594.7"/><path class="cc" d="M641.2 664.1L641.2 594.7"/><path class="ua" d="M387.0 464.5L545.1 431.2"/><path class="ub" d="M387.0 465.4L545.1 432.1"/><path class="uc" d="M387.0 465.2L545.1 431.9"/><path class="ja" d="M434.4 685.1L592.6 651.7"/><path class="jb" d="M434.4 685.9L592.6 652.5"/><path class="uc" d="M434.4 685.7L592.6 652.3"/><path class="va" d="M292.1 509.3L387.0 533.9"/><path class="vb" d="M292.1 508.7L387.0 533.3"/><rect class="mk" x="314.1" y="513.0" width="3.4" height="4.6"/><rect class="mk" x="337.9" y="519.2" width="3.4" height="4.6"/><rect class="mk" x="361.6" y="525.4" width="3.4" height="4.6"/><rect class="mn" x="290.1" y="507.0" width="4.0" height="4.6"/><path class="da" d="M561.0 680.7L640.0 753.6"/><path class="ja" d="M410.7 540.1L568.8 506.8"/><path class="jb" d="M410.7 540.9L568.8 507.6"/><path class="uc" d="M410.7 540.7L568.8 507.4"/><path class="ca" d="M640.0 594.7L640.0 525.3"/><path class="cb" d="M638.1 594.7L638.1 525.3"/><path class="cc" d="M641.2 594.7L641.2 525.3"/><path class="ca" d="M387.0 762.2L387.0 672.7"/><path class="cb" d="M385.1 762.2L385.1 672.7"/><path class="cc" d="M388.1 762.2L388.1 672.7"/><path d="M382.4 760.6L386.6 758.4L391.6 760.4L391.2 765.0L386.8 767.2L382.8 764.8Z" fill="#ee1c24" stroke="#f23a40" stroke-width="1.2" stroke-linejoin="round"/><path d="M385.2 761.8L387.6 763.4" stroke="#fbd0d0" stroke-width="1.1"/><path class="ja" d="M434.4 615.7L592.6 582.3"/><path class="jb" d="M434.4 616.5L592.6 583.1"/><path class="uc" d="M434.4 616.3L592.6 582.9"/><path class="va" d="M292.1 439.9L387.0 464.5"/><path class="vb" d="M292.1 439.3L387.0 463.9"/><rect class="mk" x="314.1" y="443.6" width="3.4" height="4.6"/><rect class="mk" x="337.9" y="449.8" width="3.4" height="4.6"/><rect class="mk" x="361.6" y="456.0" width="3.4" height="4.6"/><rect class="mn" x="290.1" y="437.6" width="4.0" height="4.6"/><path class="ja" d="M458.2 691.2L616.3 657.9"/><path class="jb" d="M458.2 692.0L616.3 658.7"/><path class="uc" d="M458.2 691.8L616.3 658.5"/><path class="ca" d="M640.0 525.3L640.0 455.9"/><path class="cb" d="M638.1 525.3L638.1 455.9"/><path class="cc" d="M641.2 525.3L641.2 455.9"/><path class="da" d="M561.0 611.3L640.0 664.1"/><path class="ca" d="M387.0 672.7L387.0 603.3"/><path class="cb" d="M385.1 672.7L385.1 603.3"/><path class="cc" d="M388.1 672.7L388.1 603.3"/><path class="ja" d="M434.4 546.3L592.6 512.9"/><path class="jb" d="M434.4 547.1L592.6 513.7"/><path class="uc" d="M434.4 546.9L592.6 513.5"/><path class="la" d="M434.4 685.1L387.0 762.2"/><path class="lb" d="M433.8 685.1L386.3 762.2"/><rect class="mn" x="638.0" y="661.8" width="4.0" height="4.6"/><path class="ja" d="M458.2 621.8L616.3 588.5"/><path class="jb" d="M458.2 622.6L616.3 589.3"/><path class="uc" d="M458.2 622.4L616.3 589.1"/><path class="da" d="M561.0 541.9L640.0 594.7"/><path class="ca" d="M387.0 603.3L387.0 533.9"/><path class="cb" d="M385.1 603.3L385.1 533.9"/><path class="cc" d="M388.1 603.3L388.1 533.9"/><path class="ua" d="M481.9 697.4L640.0 664.1"/><path class="ub" d="M481.9 698.3L640.0 665.0"/><path class="uc" d="M481.9 698.1L640.0 664.8"/><path class="la" d="M434.4 615.7L387.0 672.7"/><path class="lb" d="M433.8 615.7L386.3 672.7"/><rect class="mn" x="638.0" y="592.4" width="4.0" height="4.6"/><rect class="mn" x="558.2" y="677.9" width="5.6" height="5.6"/><circle cx="561.0" cy="680.9" r="1.4" fill="#1d1420"/><path class="ja" d="M458.2 552.4L616.3 519.1"/><path class="jb" d="M458.2 553.2L616.3 519.9"/><path class="uc" d="M458.2 553.0L616.3 519.7"/><path class="da" d="M561.0 472.5L640.0 525.3"/><path class="ca" d="M387.0 533.9L387.0 464.5"/><path class="cb" d="M385.1 533.9L385.1 464.5"/><path class="cc" d="M388.1 533.9L388.1 464.5"/><path class="ua" d="M481.9 628.0L640.0 594.7"/><path class="ub" d="M481.9 628.9L640.0 595.6"/><path class="uc" d="M481.9 628.7L640.0 595.4"/><path class="va" d="M387.0 672.7L481.9 697.4"/><path class="vb" d="M387.0 672.1L481.9 696.8"/><path class="la" d="M434.4 546.3L387.0 603.3"/><path class="lb" d="M433.8 546.3L386.3 603.3"/><rect class="mn" x="638.0" y="523.0" width="4.0" height="4.6"/><rect class="mk" x="409.0" y="676.5" width="3.4" height="4.6"/><rect class="mk" x="432.8" y="682.7" width="3.4" height="4.6"/><rect class="mk" x="456.5" y="688.8" width="3.4" height="4.6"/><rect class="mn" x="558.2" y="608.5" width="5.6" height="5.6"/><circle cx="561.0" cy="611.5" r="1.4" fill="#1d1420"/><rect class="mn" x="385.0" y="670.4" width="4.0" height="4.6"/><rect class="mn" x="431.6" y="682.3" width="5.6" height="5.6"/><circle cx="434.4" cy="685.3" r="1.4" fill="#1d1420"/><path class="ma" d="M561.0 680.7L481.9 786.9"/><path class="mb" d="M560.2 680.3L481.1 786.5"/><path class="ua" d="M481.9 558.6L640.0 525.3"/><path class="ub" d="M481.9 559.5L640.0 526.2"/><path class="uc" d="M481.9 559.3L640.0 526.0"/><path class="la" d="M434.4 685.1L481.9 786.9"/><path class="lb" d="M433.8 685.1L481.2 786.9"/><path class="va" d="M387.0 603.3L481.9 628.0"/><path class="vb" d="M387.0 602.7L481.9 627.4"/><path class="la" d="M434.4 476.9L387.0 533.9"/><path class="lb" d="M433.8 476.9L386.3 533.9"/><rect class="mn" x="638.0" y="453.6" width="4.0" height="4.6"/><rect class="mk" x="432.8" y="613.3" width="3.4" height="4.6"/><rect class="mk" x="409.0" y="607.1" width="3.4" height="4.6"/><rect class="mk" x="456.5" y="619.4" width="3.4" height="4.6"/><rect class="mn" x="558.2" y="539.1" width="5.6" height="5.6"/><circle cx="561.0" cy="542.1" r="1.4" fill="#1d1420"/><rect class="mn" x="385.0" y="601.0" width="4.0" height="4.6"/><rect class="mn" x="431.6" y="612.9" width="5.6" height="5.6"/><circle cx="434.4" cy="615.9" r="1.4" fill="#1d1420"/><path class="ma" d="M561.0 611.3L481.9 697.4"/><path class="mb" d="M560.2 610.9L481.1 697.0"/><path class="ua" d="M481.9 489.2L640.0 455.9"/><path class="ub" d="M481.9 490.1L640.0 456.8"/><path class="uc" d="M481.9 489.9L640.0 456.6"/><path class="va" d="M387.0 533.9L481.9 558.6"/><path class="vb" d="M387.0 533.3L481.9 558.0"/><rect class="mk" x="409.0" y="537.7" width="3.4" height="4.6"/><rect class="mk" x="432.8" y="543.9" width="3.4" height="4.6"/><rect class="mk" x="456.5" y="550.0" width="3.4" height="4.6"/><path class="la" d="M434.4 615.7L481.9 697.4"/><path class="lb" d="M433.8 615.7L481.2 697.4"/><rect class="mn" x="558.2" y="469.7" width="5.6" height="5.6"/><circle cx="561.0" cy="472.7" r="1.4" fill="#1d1420"/><rect class="mn" x="385.0" y="531.6" width="4.0" height="4.6"/><rect class="mn" x="431.6" y="543.5" width="5.6" height="5.6"/><circle cx="434.4" cy="546.5" r="1.4" fill="#1d1420"/><path class="ca" d="M481.9 786.9L481.9 697.4"/><path class="cb" d="M480.0 786.9L480.0 697.4"/><path class="cc" d="M483.1 786.9L483.1 697.4"/><path class="ma" d="M561.0 541.9L481.9 628.0"/><path class="mb" d="M560.2 541.5L481.1 627.6"/><path d="M477.7 785.5L481.9 783.9L486.1 785.5L485.9 789.9L481.9 791.5L477.9 789.9Z" fill="#ffffff" stroke="#c23a48" stroke-width="1" stroke-linejoin="round"/><path d="M481.9 784.3V791.1" stroke="#d9808a" stroke-width="0.8"/><path class="va" d="M387.0 464.5L481.9 489.2"/><path class="vb" d="M387.0 463.9L481.9 488.6"/><rect class="mk" x="409.0" y="468.3" width="3.4" height="4.6"/><rect class="mk" x="432.8" y="474.5" width="3.4" height="4.6"/><rect class="mk" x="456.5" y="480.6" width="3.4" height="4.6"/><path class="la" d="M434.4 546.3L481.9 628.0"/><path class="lb" d="M433.8 546.3L481.2 628.0"/><rect class="mn" x="385.0" y="462.2" width="4.0" height="4.6"/><rect class="mn" x="431.6" y="474.1" width="5.6" height="5.6"/><circle cx="434.4" cy="477.1" r="1.4" fill="#1d1420"/><path class="ma" d="M561.0 472.5L481.9 558.6"/><path class="mb" d="M560.2 472.1L481.1 558.2"/><path class="ca" d="M481.9 697.4L481.9 628.0"/><path class="cb" d="M480.0 697.4L480.0 628.0"/><path class="cc" d="M483.1 697.4L483.1 628.0"/><path class="la" d="M434.4 476.9L481.9 558.6"/><path class="lb" d="M433.8 476.9L481.2 558.6"/><path class="ca" d="M481.9 628.0L481.9 558.6"/><path class="cb" d="M480.0 628.0L480.0 558.6"/><path class="cc" d="M483.1 628.0L483.1 558.6"/><path class="ca" d="M481.9 558.6L481.9 489.2"/><path class="cb" d="M480.0 558.6L480.0 489.2"/><path class="cc" d="M483.1 558.6L483.1 489.2"/><rect class="mn" x="479.9" y="695.1" width="4.0" height="4.6"/><rect class="mn" x="479.9" y="625.7" width="4.0" height="4.6"/><rect class="mn" x="479.9" y="556.3" width="4.0" height="4.6"/><rect class="mn" x="479.9" y="486.9" width="4.0" height="4.6"/></g><path d="M1096.8 156.2 V152.4 H1100.6 M1097 152.6 L1101 156.6 M1105.6 152.4 H1109.4 V156.2 M1109.2 152.6 L1105.2 156.6 M1096.8 161 V164.8 H1100.6 M1097 164.6 L1101 160.6 M1105.6 164.8 H1109.4 V161 M1109.2 164.6 L1105.2 160.6" stroke="#1e1e1e" stroke-width="1.15" fill="none"/><path d="M1127.6 153.4 C1122.4 155.4 1120.4 160.4 1122.6 165 C1123.4 166.4 1125.4 166.2 1126.6 165.2 M1124 153 H1128.2 V157.2" stroke="#1e1e1e" stroke-width="1.2" fill="none"/><path d="M1129.2 163.8 C1134.4 161.8 1136.4 156.8 1134.2 152.2 C1133.4 150.8 1131.4 151 1130.2 152 M1132.8 164.2 H1128.6 V160" stroke="#1e1e1e" stroke-width="1.2" fill="none"/><path d="M1143.3 157.2 L1146.8 160.7 L1150.3 157.2" stroke="#777" stroke-width="1.2" fill="none"/><path d="M1154.6 146 V171.5" stroke="#dcdcdc" stroke-width="1"/><path d="M1162.4 155.3 H1173.3000000000002 V165.70000000000002 H1162.4 Z M1162.4 155.3 L1166.2 151.5 H1177.1000000000001 V161.9 L1173.3000000000002 165.70000000000002 M1173.3000000000002 155.3 L1177.1000000000001 151.5" stroke="#1e1e1e" stroke-width="1.15" fill="none" stroke-linejoin="round"/><path d="M1166.2 151.5 V161.9 H1177.1000000000001 M1166.2 161.9 L1162.4 165.70000000000002" stroke="#1e1e1e" stroke-width="0.8" fill="none"/><path d="M1191.4 155.3 L1195.2 151.5 H1206.1000000000001 V161.9 L1202.3000000000002 165.70000000000002 H1191.4 Z" fill="#c4c4c4"/><path d="M1191.4 155.3 H1202.3000000000002 V165.70000000000002 H1191.4 Z M1191.4 155.3 L1195.2 151.5 H1206.1000000000001 V161.9 L1202.3000000000002 165.70000000000002 M1202.3000000000002 155.3 L1206.1000000000001 151.5" stroke="#1e1e1e" stroke-width="1.15" fill="none" stroke-linejoin="round"/><path d="M1195.2 151.5 V161.9 H1206.1000000000001 M1195.2 161.9 L1191.4 165.70000000000002" stroke="#1e1e1e" stroke-width="0.8" fill="none"/><rect x="1213.5" y="144.4" width="29.2" height="28.1" fill="#ececec"/><path d="M1220.7 155.4 H1231.6000000000001 V165.8 H1220.7 Z M1220.7 155.4 L1224.5 151.6 H1235.4 L1231.6000000000001 155.4 Z M1231.6000000000001 155.4 L1235.4 151.6 V162.0 L1231.6000000000001 165.8 Z" fill="#0c0c0c" stroke="#0c0c0c" stroke-width="0.8"/><path d="M1220.7 155.4 H1231.6000000000001 V165.8 M1231.6000000000001 155.4 L1235.4 151.6" stroke="#e8e8e8" stroke-width="0.7" fill="none"/><path d="M1250.6 155.6 L1258 153 L1264.8 154 V158.6 L1255.6 163.6 L1250.6 160.6 Z M1250.6 155.6 L1255.6 157.6 L1264.8 154 M1255.6 157.6 V163.6" stroke="#1e1e1e" stroke-width="1.2" fill="none" stroke-linejoin="round"/><path d="M1280.2 158.8 L1287.2 152.4 L1294.2 158.8 M1282.2 157.6 V164.8 H1285.6 V160.4 H1288.8 V164.8 H1292.2 V157.6" stroke="#4a4a4a" stroke-width="1.25" fill="none" stroke-linejoin="round"/><ellipse cx="1260.2" cy="241" rx="33.5" ry="9.2" fill="none" stroke="#e4e4e6" stroke-width="4.6"/><path d="M1237.7 206.9 L1259.5 205.2 L1283.6 207.2 L1282.7 237.6 L1259.2 247.5 L1239 237.3 Z" fill="#a9a7ab" stroke="#908e92" stroke-width="0.9" stroke-linejoin="round"/><path d="M1237.7 206.9 L1260 208.2 L1283.6 207.2 M1260 208.2 L1260.2 232 L1239 237.3 M1260.2 232 L1282.7 237.6 M1260.2 232 L1259.2 247.5" stroke="#8e8c90" stroke-width="0.9" fill="none"/><path d="M1238.2 207.4 L1259.6 208.6 L1259.8 231.6 L1239.4 236.8 Z" fill="#a3a1a6"/><text x="1245.2" y="229.4" font-family="Liberation Sans, sans-serif" font-size="6.5" font-weight="bold" fill="#f6f6f6" transform="rotate(10 1247 227)">X</text><text x="1270.2" y="229.6" font-family="Liberation Sans, sans-serif" font-size="6.5" font-weight="bold" fill="#f6f6f6" transform="rotate(-12 1272 227)">Y</text><path d="M1223.6 245.2 H1238.4 M1230.6 242.4 L1230.2 248" stroke="#5c5c5e" stroke-width="1.1" fill="none"/><path d="M1282.2 245.4 L1289 246.6 L1294.6 248.6 M1286.4 243.6 L1289.2 246.8" stroke="#5c5c5e" stroke-width="1.1" fill="none"/><rect x="1284.6" y="280.4" width="7.6" height="672" fill="#f1eff3"/><rect x="1285.2" y="572" width="6.9" height="307.6" fill="#c9c8cc"/><path d="M1213.5 296.7 L1215.7 296.8 L1215.7 300.4 L1213.5 300.5 L1212.7 301.9 L1213.7 303.9 L1210.6 305.6 L1209.4 303.8 L1207.8 303.8 L1206.6 305.6 L1203.5 303.9 L1204.5 301.9 L1203.7 300.5 L1201.5 300.4 L1201.5 296.8 L1203.7 296.7 L1204.5 295.3 L1203.5 293.3 L1206.6 291.6 L1207.8 293.4 L1209.4 293.4 L1210.6 291.6 L1213.7 293.3 L1212.7 295.3 Z" fill="#7a787c" stroke="#7a787c" stroke-width="0.8" stroke-linejoin="round"/><circle cx="1208.6" cy="298.6" r="2.9" fill="#ffffff"/><path d="M1213.5 316.8 L1215.7 316.9 L1215.7 320.4 L1213.5 320.5 L1212.7 322.0 L1213.7 323.9 L1210.6 325.7 L1209.4 323.9 L1207.8 323.9 L1206.6 325.7 L1203.5 323.9 L1204.5 322.0 L1203.7 320.5 L1201.5 320.4 L1201.5 316.9 L1203.7 316.8 L1204.5 315.3 L1203.5 313.4 L1206.6 311.6 L1207.8 313.4 L1209.4 313.4 L1210.6 311.6 L1213.7 313.4 L1212.7 315.3 Z" fill="#7a787c" stroke="#7a787c" stroke-width="0.8" stroke-linejoin="round"/><circle cx="1208.6" cy="318.65000000000003" r="2.9" fill="#ffffff"/><path d="M1213.5 336.8 L1215.7 336.9 L1215.7 340.5 L1213.5 340.6 L1212.7 342.0 L1213.7 344.0 L1210.6 345.7 L1209.4 343.9 L1207.8 343.9 L1206.6 345.7 L1203.5 344.0 L1204.5 342.0 L1203.7 340.6 L1201.5 340.5 L1201.5 336.9 L1203.7 336.8 L1204.5 335.4 L1203.5 333.4 L1206.6 331.7 L1207.8 333.5 L1209.4 333.5 L1210.6 331.7 L1213.7 333.4 L1212.7 335.4 Z" fill="#7a787c" stroke="#7a787c" stroke-width="0.8" stroke-linejoin="round"/><circle cx="1208.6" cy="338.70000000000005" r="2.9" fill="#ffffff"/><path d="M1213.5 356.9 L1215.7 357.0 L1215.7 360.5 L1213.5 360.6 L1212.7 362.1 L1213.7 364.0 L1210.6 365.8 L1209.4 364.0 L1207.8 364.0 L1206.6 365.8 L1203.5 364.0 L1204.5 362.1 L1203.7 360.6 L1201.5 360.5 L1201.5 357.0 L1203.7 356.9 L1204.5 355.4 L1203.5 353.5 L1206.6 351.7 L1207.8 353.5 L1209.4 353.5 L1210.6 351.7 L1213.7 353.5 L1212.7 355.4 Z" fill="#7a787c" stroke="#7a787c" stroke-width="0.8" stroke-linejoin="round"/><circle cx="1208.6" cy="358.75" r="2.9" fill="#ffffff"/><path d="M1213.5 376.9 L1215.7 377.0 L1215.7 380.6 L1213.5 380.7 L1212.7 382.1 L1213.7 384.1 L1210.6 385.8 L1209.4 384.0 L1207.8 384.0 L1206.6 385.8 L1203.5 384.1 L1204.5 382.1 L1203.7 380.7 L1201.5 380.6 L1201.5 377.0 L1203.7 376.9 L1204.5 375.5 L1203.5 373.5 L1206.6 371.8 L1207.8 373.6 L1209.4 373.6 L1210.6 371.8 L1213.7 373.5 L1212.7 375.5 Z" fill="#7a787c" stroke="#7a787c" stroke-width="0.8" stroke-linejoin="round"/><circle cx="1208.6" cy="378.8" r="2.9" fill="#ffffff"/><path d="M1213.5 397.0 L1215.7 397.1 L1215.7 400.6 L1213.5 400.7 L1212.7 402.2 L1213.7 404.1 L1210.6 405.9 L1209.4 404.1 L1207.8 404.1 L1206.6 405.9 L1203.5 404.1 L1204.5 402.2 L1203.7 400.7 L1201.5 400.6 L1201.5 397.1 L1203.7 397.0 L1204.5 395.5 L1203.5 393.6 L1206.6 391.8 L1207.8 393.6 L1209.4 393.6 L1210.6 391.8 L1213.7 393.6 L1212.7 395.5 Z" fill="#7a787c" stroke="#7a787c" stroke-width="0.8" stroke-linejoin="round"/><circle cx="1208.6" cy="398.85" r="2.9" fill="#ffffff"/><path d="M1213.5 417.0 L1215.7 417.1 L1215.7 420.7 L1213.5 420.8 L1212.7 422.2 L1213.7 424.2 L1210.6 425.9 L1209.4 424.1 L1207.8 424.1 L1206.6 425.9 L1203.5 424.2 L1204.5 422.2 L1203.7 420.8 L1201.5 420.7 L1201.5 417.1 L1203.7 417.0 L1204.5 415.6 L1203.5 413.6 L1206.6 411.9 L1207.8 413.7 L1209.4 413.7 L1210.6 411.9 L1213.7 413.6 L1212.7 415.6 Z" fill="#7a787c" stroke="#7a787c" stroke-width="0.8" stroke-linejoin="round"/><circle cx="1208.6" cy="418.90000000000003" r="2.9" fill="#ffffff"/><path d="M1213.5 437.1 L1215.7 437.2 L1215.7 440.7 L1213.5 440.8 L1212.7 442.3 L1213.7 444.2 L1210.6 446.0 L1209.4 444.2 L1207.8 444.2 L1206.6 446.0 L1203.5 444.2 L1204.5 442.3 L1203.7 440.8 L1201.5 440.7 L1201.5 437.2 L1203.7 437.1 L1204.5 435.6 L1203.5 433.7 L1206.6 431.9 L1207.8 433.7 L1209.4 433.7 L1210.6 431.9 L1213.7 433.7 L1212.7 435.6 Z" fill="#7a787c" stroke="#7a787c" stroke-width="0.8" stroke-linejoin="round"/><circle cx="1208.6" cy="438.95000000000005" r="2.9" fill="#ffffff"/><path d="M1213.5 457.1 L1215.7 457.2 L1215.7 460.8 L1213.5 460.9 L1212.7 462.3 L1213.7 464.3 L1210.6 466.0 L1209.4 464.2 L1207.8 464.2 L1206.6 466.0 L1203.5 464.3 L1204.5 462.3 L1203.7 460.9 L1201.5 460.8 L1201.5 457.2 L1203.7 457.1 L1204.5 455.7 L1203.5 453.7 L1206.6 452.0 L1207.8 453.8 L1209.4 453.8 L1210.6 452.0 L1213.7 453.7 L1212.7 455.7 Z" fill="#7a787c" stroke="#7a787c" stroke-width="0.8" stroke-linejoin="round"/><circle cx="1208.6" cy="459.0" r="2.9" fill="#ffffff"/><path d="M1213.5 477.2 L1215.7 477.3 L1215.7 480.8 L1213.5 480.9 L1212.7 482.4 L1213.7 484.3 L1210.6 486.1 L1209.4 484.3 L1207.8 484.3 L1206.6 486.1 L1203.5 484.3 L1204.5 482.4 L1203.7 480.9 L1201.5 480.8 L1201.5 477.3 L1203.7 477.2 L1204.5 475.7 L1203.5 473.8 L1206.6 472.0 L1207.8 473.8 L1209.4 473.8 L1210.6 472.0 L1213.7 473.8 L1212.7 475.7 Z" fill="#7a787c" stroke="#7a787c" stroke-width="0.8" stroke-linejoin="round"/><circle cx="1208.6" cy="479.05000000000007" r="2.9" fill="#ffffff"/><path d="M1213.5 497.2 L1215.7 497.3 L1215.7 500.9 L1213.5 501.0 L1212.7 502.4 L1213.7 504.4 L1210.6 506.1 L1209.4 504.3 L1207.8 504.3 L1206.6 506.1 L1203.5 504.4 L1204.5 502.4 L1203.7 501.0 L1201.5 500.9 L1201.5 497.3 L1203.7 497.2 L1204.5 495.8 L1203.5 493.8 L1206.6 492.1 L1207.8 493.9 L1209.4 493.9 L1210.6 492.1 L1213.7 493.8 L1212.7 495.8 Z" fill="#7a787c" stroke="#7a787c" stroke-width="0.8" stroke-linejoin="round"/><circle cx="1208.6" cy="499.1" r="2.9" fill="#ffffff"/><path d="M1213.5 517.3 L1215.7 517.4 L1215.7 520.9 L1213.5 521.0 L1212.7 522.5 L1213.7 524.4 L1210.6 526.2 L1209.4 524.4 L1207.8 524.4 L1206.6 526.2 L1203.5 524.4 L1204.5 522.5 L1203.7 521.0 L1201.5 520.9 L1201.5 517.4 L1203.7 517.3 L1204.5 515.8 L1203.5 513.9 L1206.6 512.1 L1207.8 513.9 L1209.4 513.9 L1210.6 512.1 L1213.7 513.9 L1212.7 515.8 Z" fill="#7a787c" stroke="#7a787c" stroke-width="0.8" stroke-linejoin="round"/><circle cx="1208.6" cy="519.1500000000001" r="2.9" fill="#ffffff"/><path d="M1213.5 537.3 L1215.7 537.4 L1215.7 541.0 L1213.5 541.1 L1212.7 542.5 L1213.7 544.5 L1210.6 546.2 L1209.4 544.4 L1207.8 544.4 L1206.6 546.2 L1203.5 544.5 L1204.5 542.5 L1203.7 541.1 L1201.5 541.0 L1201.5 537.4 L1203.7 537.3 L1204.5 535.9 L1203.5 533.9 L1206.6 532.2 L1207.8 534.0 L1209.4 534.0 L1210.6 532.2 L1213.7 533.9 L1212.7 535.9 Z" fill="#7a787c" stroke="#7a787c" stroke-width="0.8" stroke-linejoin="round"/><circle cx="1208.6" cy="539.2" r="2.9" fill="#ffffff"/><path d="M1213.5 557.4 L1215.7 557.5 L1215.7 561.0 L1213.5 561.1 L1212.7 562.6 L1213.7 564.5 L1210.6 566.3 L1209.4 564.5 L1207.8 564.5 L1206.6 566.3 L1203.5 564.5 L1204.5 562.6 L1203.7 561.1 L1201.5 561.0 L1201.5 557.5 L1203.7 557.4 L1204.5 555.9 L1203.5 554.0 L1206.6 552.2 L1207.8 554.0 L1209.4 554.0 L1210.6 552.2 L1213.7 554.0 L1212.7 555.9 Z" fill="#7a787c" stroke="#7a787c" stroke-width="0.8" stroke-linejoin="round"/><circle cx="1208.6" cy="559.25" r="2.9" fill="#ffffff"/><path d="M1168.9 578.9 V583 H1163.6 Z" fill="#3a3a3a"/><path d="M1187.3 598.2 V602.6 H1181.9 Z" fill="#3a3a3a"/><path d="M1193.2 610.1 H1271 L1284.4 619.8 L1271 629.5 H1193.2 Z" fill="#f9a877"/><path d="M1193.8 611.0 H1270.6 L1283.2 619.8 L1270.6 628.6 H1193.8 Z" fill="#f07021"/><path d="M1213.6 618.0 L1215.8 618.1 L1215.8 621.7 L1213.6 621.8 L1212.8 623.2 L1213.8 625.2 L1210.7 626.9 L1209.5 625.1 L1207.9 625.1 L1206.7 626.9 L1203.6 625.2 L1204.6 623.2 L1203.8 621.8 L1201.6 621.7 L1201.6 618.1 L1203.8 618.0 L1204.6 616.6 L1203.6 614.6 L1206.7 612.9 L1207.9 614.7 L1209.5 614.7 L1210.7 612.9 L1213.8 614.6 L1212.8 616.6 Z" fill="#8d8a88" stroke="#8d8a88" stroke-width="0.8" stroke-linejoin="round"/><circle cx="1208.7" cy="619.9" r="2.3" fill="#f07021"/><path d="M1193.2 630.1 H1271 L1284.4 639.8 L1271 649.5 H1193.2 Z" fill="#f9a877"/><path d="M1193.8 631.0 H1270.6 L1283.2 639.8 L1270.6 648.6 H1193.8 Z" fill="#f07021"/><path d="M1213.6 638.1 L1215.8 638.2 L1215.8 641.7 L1213.6 641.8 L1212.8 643.3 L1213.8 645.2 L1210.7 647.0 L1209.5 645.2 L1207.9 645.2 L1206.7 647.0 L1203.6 645.2 L1204.6 643.3 L1203.8 641.8 L1201.6 641.7 L1201.6 638.2 L1203.8 638.1 L1204.6 636.6 L1203.6 634.7 L1206.7 632.9 L1207.9 634.7 L1209.5 634.7 L1210.7 632.9 L1213.8 634.7 L1212.8 636.6 Z" fill="#8d8a88" stroke="#8d8a88" stroke-width="0.8" stroke-linejoin="round"/><circle cx="1208.7" cy="639.9499999999999" r="2.3" fill="#f07021"/><path d="M1193.2 650.2 H1271 L1284.4 659.9 L1271 669.6 H1193.2 Z" fill="#f9a877"/><path d="M1193.8 651.1 H1270.6 L1283.2 659.9 L1270.6 668.7 H1193.8 Z" fill="#f07021"/><path d="M1213.6 658.1 L1215.8 658.2 L1215.8 661.8 L1213.6 661.9 L1212.8 663.3 L1213.8 665.3 L1210.7 667.0 L1209.5 665.2 L1207.9 665.2 L1206.7 667.0 L1203.6 665.3 L1204.6 663.3 L1203.8 661.9 L1201.6 661.8 L1201.6 658.2 L1203.8 658.1 L1204.6 656.7 L1203.6 654.7 L1206.7 653.0 L1207.9 654.8 L1209.5 654.8 L1210.7 653.0 L1213.8 654.7 L1212.8 656.7 Z" fill="#8d8a88" stroke="#8d8a88" stroke-width="0.8" stroke-linejoin="round"/><circle cx="1208.7" cy="660.0" r="2.3" fill="#f07021"/><path d="M1193.2 670.2 H1271 L1284.4 679.9 L1271 689.6 H1193.2 Z" fill="#f9a877"/><path d="M1193.8 671.1 H1270.6 L1283.2 679.9 L1270.6 688.8 H1193.8 Z" fill="#f07021"/><path d="M1213.6 678.2 L1215.8 678.3 L1215.8 681.8 L1213.6 681.9 L1212.8 683.4 L1213.8 685.3 L1210.7 687.1 L1209.5 685.3 L1207.9 685.3 L1206.7 687.1 L1203.6 685.3 L1204.6 683.4 L1203.8 681.9 L1201.6 681.8 L1201.6 678.3 L1203.8 678.2 L1204.6 676.7 L1203.6 674.8 L1206.7 673.0 L1207.9 674.8 L1209.5 674.8 L1210.7 673.0 L1213.8 674.8 L1212.8 676.7 Z" fill="#8d8a88" stroke="#8d8a88" stroke-width="0.8" stroke-linejoin="round"/><circle cx="1208.7" cy="680.05" r="2.3" fill="#f07021"/><path d="M1193.2 690.3 H1271 L1284.4 700.0 L1271 709.7 H1193.2 Z" fill="#f9a877"/><path d="M1193.8 691.2 H1270.6 L1283.2 700.0 L1270.6 708.8 H1193.8 Z" fill="#f07021"/><path d="M1213.6 698.2 L1215.8 698.3 L1215.8 701.9 L1213.6 702.0 L1212.8 703.4 L1213.8 705.4 L1210.7 707.1 L1209.5 705.3 L1207.9 705.3 L1206.7 707.1 L1203.6 705.4 L1204.6 703.4 L1203.8 702.0 L1201.6 701.9 L1201.6 698.3 L1203.8 698.2 L1204.6 696.8 L1203.6 694.8 L1206.7 693.1 L1207.9 694.9 L1209.5 694.9 L1210.7 693.1 L1213.8 694.8 L1212.8 696.8 Z" fill="#8d8a88" stroke="#8d8a88" stroke-width="0.8" stroke-linejoin="round"/><circle cx="1208.7" cy="700.1" r="2.3" fill="#f07021"/><path d="M1193.2 710.4 H1271 L1284.4 720.0 L1271 729.8 H1193.2 Z" fill="#f9a877"/><path d="M1193.8 711.2 H1270.6 L1283.2 720.0 L1270.6 728.9 H1193.8 Z" fill="#f07021"/><path d="M1213.6 718.3 L1215.8 718.4 L1215.8 721.9 L1213.6 722.0 L1212.8 723.5 L1213.8 725.4 L1210.7 727.2 L1209.5 725.4 L1207.9 725.4 L1206.7 727.2 L1203.6 725.4 L1204.6 723.5 L1203.8 722.0 L1201.6 721.9 L1201.6 718.4 L1203.8 718.3 L1204.6 716.8 L1203.6 714.9 L1206.7 713.1 L1207.9 714.9 L1209.5 714.9 L1210.7 713.1 L1213.8 714.9 L1212.8 716.8 Z" fill="#8d8a88" stroke="#8d8a88" stroke-width="0.8" stroke-linejoin="round"/><circle cx="1208.7" cy="720.15" r="2.3" fill="#f07021"/><path d="M1193.2 730.4 H1271 L1284.4 740.1 L1271 749.8 H1193.2 Z" fill="#f9a877"/><path d="M1193.8 731.3 H1270.6 L1283.2 740.1 L1270.6 748.9 H1193.8 Z" fill="#f07021"/><path d="M1213.6 738.3 L1215.8 738.4 L1215.8 742.0 L1213.6 742.1 L1212.8 743.5 L1213.8 745.5 L1210.7 747.2 L1209.5 745.4 L1207.9 745.4 L1206.7 747.2 L1203.6 745.5 L1204.6 743.5 L1203.8 742.1 L1201.6 742.0 L1201.6 738.4 L1203.8 738.3 L1204.6 736.9 L1203.6 734.9 L1206.7 733.2 L1207.9 735.0 L1209.5 735.0 L1210.7 733.2 L1213.8 734.9 L1212.8 736.9 Z" fill="#8d8a88" stroke="#8d8a88" stroke-width="0.8" stroke-linejoin="round"/><circle cx="1208.7" cy="740.1999999999999" r="2.3" fill="#f07021"/><path d="M1193.2 750.5 H1271 L1284.4 760.1 L1271 769.9 H1193.2 Z" fill="#f9a877"/><path d="M1193.8 751.4 H1270.6 L1283.2 760.1 L1270.6 769.0 H1193.8 Z" fill="#f07021"/><path d="M1213.6 758.4 L1215.8 758.5 L1215.8 762.0 L1213.6 762.1 L1212.8 763.6 L1213.8 765.5 L1210.7 767.3 L1209.5 765.5 L1207.9 765.5 L1206.7 767.3 L1203.6 765.5 L1204.6 763.6 L1203.8 762.1 L1201.6 762.0 L1201.6 758.5 L1203.8 758.4 L1204.6 756.9 L1203.6 755.0 L1206.7 753.2 L1207.9 755.0 L1209.5 755.0 L1210.7 753.2 L1213.8 755.0 L1212.8 756.9 Z" fill="#8d8a88" stroke="#8d8a88" stroke-width="0.8" stroke-linejoin="round"/><circle cx="1208.7" cy="760.25" r="2.3" fill="#f07021"/><path d="M1163.4 777.2 L1168.2 780.6 L1163.4 784.0 Z" fill="#3a3a3a"/><path d="M1163.4 797.2 L1168.2 800.6 L1163.4 804.0 Z" fill="#3a3a3a"/><path d="M1163.4 817.3 L1168.2 820.7 L1163.4 824.1 Z" fill="#3a3a3a"/><path d="M1163.4 837.3 L1168.2 840.7 L1163.4 844.1 Z" fill="#3a3a3a"/><path d="M1163.4 857.3 L1168.2 860.7 L1163.4 864.1 Z" fill="#3a3a3a"/><path d="M1163.4 877.4 L1168.2 880.8 L1163.4 884.1 Z" fill="#3a3a3a"/><path d="M1163.4 897.4 L1168.2 900.8 L1163.4 904.2 Z" fill="#3a3a3a"/><path d="M1163.4 917.4 L1168.2 920.8 L1163.4 924.2 Z" fill="#3a3a3a"/><path d="M1163.4 937.4 L1168.2 940.8 L1163.4 944.2 Z" fill="#3a3a3a"/></svg>
<div class="abs" style="left:1190px;top:280.4px;width:80px;height:8px;overflow:hidden"><svg style="left:0;top:0" width="80" height="8" viewBox="1190 280.4 80 8"><path d="M1213.5 276.6 L1215.7 276.7 L1215.7 280.3 L1213.5 280.4 L1212.7 281.8 L1213.7 283.8 L1210.6 285.5 L1209.4 283.7 L1207.8 283.7 L1206.6 285.5 L1203.5 283.8 L1204.5 281.8 L1203.7 280.4 L1201.5 280.3 L1201.5 276.7 L1203.7 276.6 L1204.5 275.2 L1203.5 273.2 L1206.6 271.5 L1207.8 273.3 L1209.4 273.3 L1210.6 271.5 L1213.7 273.2 L1212.7 275.2 Z" fill="#7a787c" stroke="#7a787c" stroke-width="0.8" stroke-linejoin="round"/><circle cx="1208.6" cy="278.5" r="2.9" fill="#ffffff"/></svg><span class="t" style="left:31px;top:-7.0px;font-size:10.8px;color:#727074">N165</span></div>
<span class="t" style="left:1221.0px;top:293.0px;font-size:10.8px;color:#727074;font-weight:normal;font-style:normal;letter-spacing:-0.271px;">N138</span>
<span class="t" style="left:1221.0px;top:313.0px;font-size:10.8px;color:#727074;font-weight:normal;font-style:normal;letter-spacing:-0.271px;">N134</span>
<span class="t" style="left:1221.0px;top:333.0px;font-size:10.8px;color:#727074;font-weight:normal;font-style:normal;letter-spacing:-0.271px;">N144</span>
<span class="t" style="left:1221.0px;top:353.0px;font-size:10.8px;color:#727074;font-weight:normal;font-style:normal;letter-spacing:-0.271px;">N142</span>
<span class="t" style="left:1221.0px;top:374.0px;font-size:10.8px;color:#727074;font-weight:normal;font-style:normal;letter-spacing:-0.271px;">N140</span>
<span class="t" style="left:1221.0px;top:394.0px;font-size:10.8px;color:#727074;font-weight:normal;font-style:normal;letter-spacing:-0.271px;">N150</span>
<span class="t" style="left:1221.0px;top:414.0px;font-size:10.8px;color:#727074;font-weight:normal;font-style:normal;letter-spacing:-0.271px;">N146</span>
<span class="t" style="left:1221.0px;top:434.0px;font-size:10.8px;color:#727074;font-weight:normal;font-style:normal;letter-spacing:-0.271px;">N169</span>
<span class="t" style="left:1221.0px;top:454.0px;font-size:10.8px;color:#727074;font-weight:normal;font-style:normal;letter-spacing:-0.271px;">N167</span>
<span class="t" style="left:1221.0px;top:474.0px;font-size:10.8px;color:#727074;font-weight:normal;font-style:normal;letter-spacing:-0.271px;">N166</span>
<span class="t" style="left:1221.0px;top:494.0px;font-size:10.8px;color:#727074;font-weight:normal;font-style:normal;letter-spacing:-0.271px;">N165</span>
<span class="t" style="left:1221.0px;top:514.0px;font-size:10.8px;color:#727074;font-weight:normal;font-style:normal;letter-spacing:-0.271px;">N164</span>
<span class="t" style="left:1221.0px;top:534.0px;font-size:10.8px;color:#727074;font-weight:normal;font-style:normal;letter-spacing:-0.271px;">N163</span>
<span class="t" style="left:1221.0px;top:554.0px;font-size:10.8px;color:#727074;font-weight:normal;font-style:normal;letter-spacing:-0.271px;">N161</span>
<span class="t" style="left:1185.0px;top:574.0px;font-size:10.8px;color:#6a686c;font-weight:normal;font-style:normal;letter-spacing:-0.058px;">Typology 3</span>
<div class="abs" style="left:1194.2px;top:590.2px;width:88.6px;height:17.6px;border:1px solid #f5b48e;background:#fff"></div>
<span class="t" style="left:1202.8px;top:594.0px;font-size:10.8px;color:#5a585c;font-weight:normal;font-style:normal;letter-spacing:-0.018px;">Arrangement 3</span>
<span class="t" style="left:1221.0px;top:614.0px;font-size:10.8px;color:#ffffff;font-weight:bold;font-style:normal;letter-spacing:-0.812px;text-shadow:0 0 1px rgba(255,255,255,.3);">N2</span>
<span class="t" style="left:1221.0px;top:634.0px;font-size:10.8px;color:#ffffff;font-weight:bold;font-style:normal;letter-spacing:-0.812px;text-shadow:0 0 1px rgba(255,255,255,.3);">N3</span>
<span class="t" style="left:1221.0px;top:654.0px;font-size:10.8px;color:#ffffff;font-weight:bold;font-style:normal;letter-spacing:-0.812px;text-shadow:0 0 1px rgba(255,255,255,.3);">N8</span>
<span class="t" style="left:1221.0px;top:674.0px;font-size:10.8px;color:#ffffff;font-weight:bold;font-style:normal;letter-spacing:-0.206px;text-shadow:0 0 1px rgba(255,255,255,.3);">N12</span>
<span class="t" style="left:1221.0px;top:694.0px;font-size:10.8px;color:#ffffff;font-weight:bold;font-style:normal;letter-spacing:-0.812px;text-shadow:0 0 1px rgba(255,255,255,.3);">N5</span>
<span class="t" style="left:1221.0px;top:714.0px;font-size:10.8px;color:#ffffff;font-weight:bold;font-style:normal;letter-spacing:-0.206px;text-shadow:0 0 1px rgba(255,255,255,.3);">N16</span>
<span class="t" style="left:1221.0px;top:734.0px;font-size:10.8px;color:#ffffff;font-weight:bold;font-style:normal;letter-spacing:-0.206px;text-shadow:0 0 1px rgba(255,255,255,.3);">N13</span>
<span class="t" style="left:1221.0px;top:754.0px;font-size:10.8px;color:#ffffff;font-weight:bold;font-style:normal;letter-spacing:-0.206px;text-shadow:0 0 1px rgba(255,255,255,.3);">N14</span>
<span class="t" style="left:1184.6px;top:774.0px;font-size:10.8px;color:#6a686c;font-weight:normal;font-style:normal;letter-spacing:-0.058px;">Typology 4</span>
<span class="t" style="left:1184.6px;top:795.0px;font-size:10.8px;color:#6a686c;font-weight:normal;font-style:normal;letter-spacing:-0.058px;">Typology 5</span>
<span class="t" style="left:1184.6px;top:815.0px;font-size:10.8px;color:#6a686c;font-weight:normal;font-style:normal;letter-spacing:-0.058px;">Typology 6</span>
<span class="t" style="left:1184.6px;top:835.0px;font-size:10.8px;color:#6a686c;font-weight:normal;font-style:normal;letter-spacing:-0.058px;">Typology 7</span>
<span class="t" style="left:1184.6px;top:855.0px;font-size:10.8px;color:#6a686c;font-weight:normal;font-style:normal;letter-spacing:-0.058px;">Typology 8</span>
<span class="t" style="left:1184.6px;top:875.0px;font-size:10.8px;color:#6a686c;font-weight:normal;font-style:normal;letter-spacing:-0.058px;">Typology 9</span>
<span class="t" style="left:1184.6px;top:895.0px;font-size:10.8px;color:#6a686c;font-weight:normal;font-style:normal;letter-spacing:0.037px;">Typology 10</span>
<span class="t" style="left:1184.6px;top:915.0px;font-size:10.8px;color:#6a686c;font-weight:normal;font-style:normal;letter-spacing:0.118px;">Typology 11</span>
<span class="t" style="left:1184.6px;top:935.0px;font-size:10.8px;color:#6a686c;font-weight:normal;font-style:normal;letter-spacing:0.037px;">Typology 12</span>
<div class="abs" style="left:1310.6px;top:144px;width:5.6px;height:813px;background:#c9c8cb"></div>
<div class="abs" style="left:1316.2px;top:144px;width:428px;height:813px;background:#fff"></div>
<div class="abs" style="left:1316.2px;top:144px;width:428px;height:22.6px;background:#f07021"></div>
<span class="t" style="left:1325.5px;top:150.0px;font-size:11px;color:#ffffff;font-weight:bold;font-style:normal;letter-spacing:0.250px;">8x</span>
<span class="t" style="left:1575.7px;top:150.0px;font-size:11px;color:#f9b48c;font-weight:bold;font-style:normal;letter-spacing:-0.375px;">Open</span>
<span class="t" style="left:1621.7px;top:150.0px;font-size:11px;color:#f9b48c;font-weight:bold;font-style:normal;letter-spacing:-0.379px;">Load update</span>
<span class="t" style="left:1701.8px;top:150.0px;font-size:11px;color:#f9b48c;font-weight:bold;font-style:normal;letter-spacing:-0.367px;">Reset</span>
<span class="t" style="left:1347.5px;top:181.0px;font-size:11.2px;color:#3a3a3a;font-weight:bold;font-style:normal;letter-spacing:-0.279px;">General</span>
<span class="t" style="left:1347.5px;top:203.0px;font-size:11px;color:#4a4a4a;font-weight:normal;font-style:normal;letter-spacing:-0.281px;">Name</span>
<span class="t" style="left:1347.5px;top:225.0px;font-size:11px;color:#4a4a4a;font-weight:normal;font-style:normal;letter-spacing:-0.099px;">Node</span>
<span class="t" style="left:1347.5px;top:247.0px;font-size:11px;color:#4a4a4a;font-weight:normal;font-style:normal;letter-spacing:-0.101px;">Connected members</span>
<span class="t" style="left:1347.5px;top:269.0px;font-size:11px;color:#4a4a4a;font-weight:normal;font-style:normal;letter-spacing:0.137px;">Connection point [m]</span>
<div class="inp" style="top:200.2px"></div>
<div class="inp" style="top:222.0px"></div>
<div class="inp" style="top:265.6px"></div>
<span class="t" style="left:1479.5px;top:203.0px;font-size:11px;color:#b4b4b4;font-weight:normal;font-style:normal;letter-spacing:-0.007px;">&lt;Multiple values&gt;</span>
<span class="t" style="left:1479.5px;top:225.0px;font-size:11px;color:#b4b4b4;font-weight:normal;font-style:normal;letter-spacing:-0.007px;">&lt;Multiple values&gt;</span>
<span class="t" style="left:1479.0px;top:246.0px;font-size:11px;color:#333;font-weight:normal;font-style:normal;letter-spacing:-0.038px;">&lt;Multiple values&gt;</span>
<span class="t" style="left:1479.5px;top:269.0px;font-size:11px;color:#b8b8b8;font-weight:normal;font-style:normal;letter-spacing:-0.455px;">[0.00; 12.19; 0.00]</span>
<span class="t" style="left:1347.6px;top:301.0px;font-size:11.2px;color:#3a3a3a;font-weight:bold;font-style:normal;letter-spacing:-1.288px;">Loads</span>
<span class="t" style="left:1347.6px;top:324.0px;font-size:11px;color:#4a4a4a;font-weight:normal;font-style:normal;letter-spacing:-0.346px;">Result classes for checks</span>
<div class="abs" style="left:1475px;top:320.4px;width:261.5px;height:16px;border:1px solid #cfcfcf;background:#fff"></div>
<span class="t" style="left:1480.3px;top:323.0px;font-size:11px;color:#2e2e2e;font-weight:normal;font-style:normal;letter-spacing:-0.374px;">All ULS Fund</span>
<span class="t" style="left:1391.5px;top:363.0px;font-size:10.6px;color:#5a5a5a;font-weight:normal;font-style:normal;letter-spacing:0.057px;">This result class has evaluation of critical effects activated. Only critical</span>
<span class="t" style="left:1391.5px;top:376.0px;font-size:10.6px;color:#5a5a5a;font-weight:normal;font-style:normal;letter-spacing:0.149px;">effects will be transfered to the connection.</span>
<svg style="left:0;top:0" width="1744" height="984" viewBox="0 0 1744 984"><path d="M1332.6 185.2 L1336.3 188.79999999999998 L1340.0 185.2" stroke="#f08a5c" stroke-width="1.2" fill="none"/><path d="M1725.6 246.2 V257.4 L1728.2 255 L1730.2 259.6 L1731.8 258.9 L1729.8 254.4 L1733.4 254.2 Z" fill="#fff" stroke="#555" stroke-width="0.9" stroke-linejoin="round"/><path d="M1332.6 305.6 L1336.3 309.20000000000005 L1340.0 305.6" stroke="#f08a5c" stroke-width="1.2" fill="none"/><path d="M1724.8 326.6 L1728.9 330.6 L1733 326.6" stroke="#444" stroke-width="1.3" fill="none"/><path d="M1363.5 368.2 L1371.6 382.6 H1355.4 Z" fill="#e9dc3c" stroke="#d6c82e" stroke-width="0.8" stroke-linejoin="round"/><path d="M1363.5 372.6 V378" stroke="#3a3a2a" stroke-width="1.5"/><circle cx="1363.5" cy="380.2" r="0.9" fill="#3a3a2a"/></svg>
</div>
</body></html>
